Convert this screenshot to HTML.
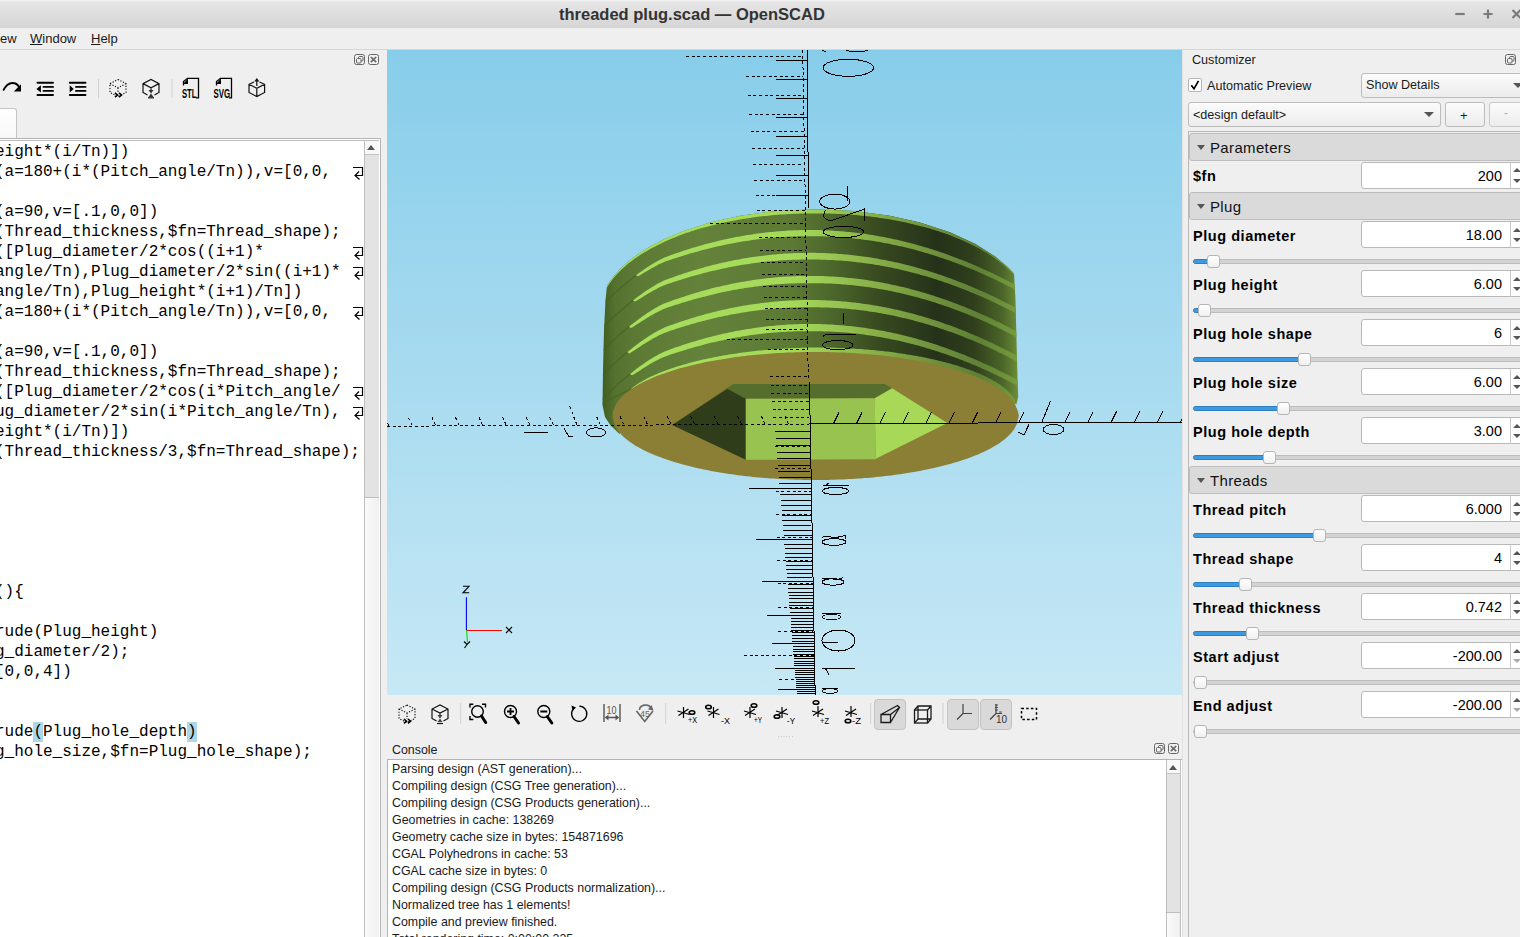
<!DOCTYPE html>
<html><head><meta charset="utf-8">
<style>
*{box-sizing:border-box}
html,body{margin:0;padding:0}
body{width:1520px;height:937px;overflow:hidden;position:relative;background:#efefef;font-family:"Liberation Sans",sans-serif;color:#000}
.a{position:absolute}
#title{left:0;top:0;width:1520px;height:28px;background:linear-gradient(#f4f4f4 0,#e6e6e6 2px,#d5d5d5 28px)}
#title .t{left:559px;top:5px;font-size:16.5px;font-weight:bold;color:#333;white-space:nowrap}
#menu{left:0;top:28px;width:1520px;height:22px;background:#efefef;border-bottom:1px solid #d6d6d6}
.mi{top:3px;font-size:13px;color:#1a1a1a;white-space:nowrap}
.code b{font-weight:normal;background:#acd7e6;display:inline-block;height:20px;vertical-align:top}
.code{font-family:"Liberation Mono",monospace;font-size:16px;white-space:pre;line-height:20px;height:20px;color:#000}
.cons{font-size:12.4px;white-space:pre;color:#1a1a1a;line-height:17px}
.lbl{font-size:14.5px;font-weight:bold;letter-spacing:0.55px;white-space:nowrap}
.spin{left:1361px;width:170px;height:27px;background:#fff;border:1px solid #b9b9b9;border-radius:3px}
.spin .v{right:28px;top:5px;font-size:14.5px;white-space:nowrap;text-align:right}
.spin .sep{left:147.5px;top:0;width:1px;height:26px;background:#c8c8c8}
.groove{left:1193px;width:330px;height:5px;background:#d3d3d3;border:1px solid #bdbdbd;border-radius:3px}
.fill{left:1193px;height:5px;background:#3d9ae0;border:1px solid #2f7fbf;border-radius:3px}
.handle{width:13px;height:13px;background:linear-gradient(#fff,#f0f0f0);border:1px solid #b5b5b5;border-radius:3px}
.hdr{left:1189px;width:340px;height:28px;background:#dadada;border:1px solid #bdbdbd;border-radius:3px}
.hdr .tx{left:20px;top:5px;font-size:15px;letter-spacing:0.35px;color:#111;white-space:nowrap}
.hdr .tri{left:7px;top:11px;width:0;height:0;border-left:4.5px solid transparent;border-right:4.5px solid transparent;border-top:5px solid #555}
</style></head>
<body>
<div id="title" class="a"><div class="a t">threaded plug.scad — OpenSCAD</div></div>
<svg class="a" style="left:1440px;top:0" width="80" height="28"><g stroke="#7a7a7a" stroke-width="2.2" fill="none"><path d="M1455.3 14H1464.7" transform="translate(-1440 0)"/><path d="M1483.5 14H1492.5M1488 9.5V18.5" transform="translate(-1440 0)"/><path d="M1512.5 10L1520.5 18M1520.5 10L1512.5 18" transform="translate(-1440 0)"/></g></svg>
<svg class="a" style="left:381px;top:505px" width="6" height="24"><path d="M3.5 6V20" stroke="#b0b0b0" stroke-width="1" stroke-dasharray="1 2"/></svg>
<div id="menu" class="a">
  <div class="a mi" style="left:0">ew</div>
  <div class="a mi" style="left:30px"><u>W</u>indow</div>
  <div class="a mi" style="left:91px"><u>H</u>elp</div>
</div>

<!-- LEFT EDITOR DOCK -->
<div class="a" id="editor" style="left:0;top:50px;width:387px;height:887px;background:#efefef">
</div>
<svg class="a" style="left:0;top:50px" width="387" height="88" viewBox="0 50 387 88">
<g fill="none" stroke="#666" stroke-width="1">
 <rect x="354.5" y="54.5" width="10" height="10" rx="2"/>
 <rect x="356.5" y="58.5" width="4.5" height="4.5" rx="1" stroke-width="1"/>
 <path d="M358.5 58V57.5Q358.5 56.5 359.5 56.5H362Q363 56.5 363 57.5V60Q363 61 362 61H361"/>
 <rect x="368.5" y="54.5" width="10" height="10" rx="2"/>
 <path d="M370.8 57L376.2 62.2M376.2 57L370.8 62.2" stroke-width="1.6"/>
</g>
<!-- redo -->
<path d="M3.2 90.5Q7 83 12.5 83Q17 83 19 87" fill="none" stroke="#000" stroke-width="1.8"/>
<path d="M21 84.3V91.6H13.8Z" fill="#000"/>
<!-- unindent -->
<g stroke="#000" stroke-width="1.9" stroke-linecap="round">
<path d="M37.5 82.8H53M43.5 86.9H53M43.5 90.9H53M37.5 95H53"/>
<path d="M69.8 82.8H85.5M76 86.9H85.5M76 90.9H85.5M69.8 95H85.5"/>
</g>
<path d="M36.4 88.9L40.9 85.3V92.4Z M69.7 85.3V92.4L73.7 88.9Z" fill="#000"/>
<path d="M98.5 79V98M172 79V98" stroke="#d2d2d2" stroke-width="1"/>
<!-- preview dotted cube -->
<g fill="none" stroke="#000" stroke-width="1.1" stroke-dasharray="1.2 1.6">
<path d="M118 79.5L126 83.6V92.5L118 96.5L110 92.5V83.6Z M110 83.6L118 87.8L126 83.6M118 87.8V93"/>
</g>
<path d="M115 92.8L117.5 95L115 97.2M119 92.8L121.5 95L119 97.2" fill="none" stroke="#000" stroke-width="1.6"/>
<!-- render cube -->
<g fill="none" stroke="#111" stroke-width="1.2">
<path d="M147.5 95L143 92.5V83.6L151 79.5L159 83.6V92.5L154.5 95M143 83.6L151 87.8L159 83.6M151 87.8V90"/>
</g>
<path d="M148.5 90H153.5L151 93.5Z M151 93.5L148.5 97H153.5Z" fill="#333"/>
<path d="M148 97.8H154" stroke="#111" stroke-width="1.2"/>
<!-- STL / SVG -->
<g fill="none" stroke="#000" stroke-width="1.3">
<path d="M183.5 85.5V81.5L187.5 78.3H198.5V97.8H196"/>
<path d="M216.5 85.5V81.5L220.5 78.3H231.5V97.8H229"/>
</g>
<path d="M183 84L188 78.5V84Z M216 84L221 78.5V84Z" fill="#000"/>
<text x="182" y="98" font-family="Liberation Sans" font-weight="bold" font-size="12" textLength="14.5" lengthAdjust="spacingAndGlyphs">STL</text>
<text x="213.5" y="98" font-family="Liberation Sans" font-weight="bold" font-size="12" textLength="16.5" lengthAdjust="spacingAndGlyphs">SVG</text>
<!-- export cube -->
<g fill="none" stroke="#111" stroke-width="1.2">
<path d="M254 82L249 84.3V92.5L256.8 96.5L264.6 92.5V84.3L259.5 82M249 84.3L256.8 88.3L264.6 84.3M256.8 88.3V96.5"/>
<path d="M256.8 86V79.5"/>
</g>
<path d="M254.3 81.5L256.8 78L259.3 81.5Z" fill="#111"/>
</svg>

<!-- tab -->
<div class="a" style="left:-4px;top:108px;width:21px;height:33px;background:linear-gradient(#fff,#f7f7f7);border:1px solid #c4c4c4;border-bottom:none;border-radius:3px 3px 0 0"></div>
<!-- editor frame -->
<div class="a" style="left:-2px;top:138px;width:383px;height:805px;border:1px solid #b3b3b3;background:#fff"></div>
<div class="a" style="left:-2px;top:140px;width:381px;height:800px;border:1px solid #bcbcbc;background:#fff"></div>
<!-- scrollbar -->
<div class="a" style="left:364px;top:141px;width:15px;height:796px;background:linear-gradient(90deg,#fafafa,#f0f0f0);border-left:1px solid #bfbfbf"></div>
<div class="a" style="left:364px;top:141px;width:15px;height:14px;background:#f8f8f8;border-left:1px solid #bfbfbf;border-bottom:1px solid #c4c4c4"></div>
<div class="a" style="left:367px;top:145px;width:0;height:0;border-left:4.5px solid transparent;border-right:4.5px solid transparent;border-bottom:5px solid #555"></div>
<div class="a" style="left:364px;top:155px;width:15px;height:343px;background:#e3e3e3;border-left:1px solid #bfbfbf;border-bottom:1px solid #bdbdbd"></div>

<div id="codebox" class="a" style="left:0;top:141px;width:364px;height:796px;overflow:hidden">
<div class="a code" style="left:-5px;top:1px">eight*(i/Tn)])</div>
<div class="a code" style="left:-5px;top:21px">(a=180+(i*(Pitch_angle/Tn)),v=[0,0,</div>
<div class="a code" style="left:-5px;top:61px">(a=90,v=[.1,0,0])</div>
<div class="a code" style="left:-5px;top:81px">(Thread_thickness,$fn=Thread_shape);</div>
<div class="a code" style="left:-5px;top:101px">([Plug_diameter/2*cos((i+1)*</div>
<div class="a code" style="left:-5px;top:121px">angle/Tn),Plug_diameter/2*sin((i+1)*</div>
<div class="a code" style="left:-5px;top:141px">angle/Tn),Plug_height*(i+1)/Tn])</div>
<div class="a code" style="left:-5px;top:161px">(a=180+(i*(Pitch_angle/Tn)),v=[0,0,</div>
<div class="a code" style="left:-5px;top:201px">(a=90,v=[.1,0,0])</div>
<div class="a code" style="left:-5px;top:221px">(Thread_thickness,$fn=Thread_shape);</div>
<div class="a code" style="left:-5px;top:241px">([Plug_diameter/2*cos(i*Pitch_angle/</div>
<div class="a code" style="left:-5px;top:261px">ug_diameter/2*sin(i*Pitch_angle/Tn),</div>
<div class="a code" style="left:-5px;top:281px">eight*(i/Tn)])</div>
<div class="a code" style="left:-5px;top:301px">(Thread_thickness/3,$fn=Thread_shape);</div>
<div class="a code" style="left:-5px;top:441px">(){</div>
<div class="a code" style="left:-5px;top:481px">rude(Plug_height)</div>
<div class="a code" style="left:-5px;top:501px">g_diameter/2);</div>
<div class="a code" style="left:-5px;top:521px">[0,0,4])</div>
<div class="a code" style="left:-5px;top:581px">rude<b>(</b>Plug_hole_depth<b>)</b></div>
<div class="a code" style="left:-5px;top:601px">g_hole_size,$fn=Plug_hole_shape);</div>
<svg class="a" style="left:0;top:0" width="364" height="796">
<path d="M353 26.5H362.5V34.5H355M359 30.5L355 34.5L359.5 38.5" fill="none" stroke="#000" stroke-width="1.2"/>
<path d="M353 106.5H362.5V114.5H355M359 110.5L355 114.5L359.5 118.5" fill="none" stroke="#000" stroke-width="1.2"/>
<path d="M353 126.5H362.5V134.5H355M359 130.5L355 134.5L359.5 138.5" fill="none" stroke="#000" stroke-width="1.2"/>
<path d="M353 166.5H362.5V174.5H355M359 170.5L355 174.5L359.5 178.5" fill="none" stroke="#000" stroke-width="1.2"/>
<path d="M353 246.5H362.5V254.5H355M359 250.5L355 254.5L359.5 258.5" fill="none" stroke="#000" stroke-width="1.2"/>
<path d="M353 266.5H362.5V274.5H355M359 270.5L355 274.5L359.5 278.5" fill="none" stroke="#000" stroke-width="1.2"/>
</svg>
</div>

<!-- VIEWPORT -->
<div class="a" id="vp" style="left:387px;top:50px;width:795px;height:645px;background:linear-gradient(#87cdea,#c7e8f5);overflow:hidden">
</div>
<!--VPSTART-->
<svg class="a" style="left:387px;top:50px" width="795" height="645" viewBox="387 50 795 645">
<defs>
<linearGradient id="gb" x1="600" x2="1022" y1="0" y2="0" gradientUnits="userSpaceOnUse">
<stop offset="0" stop-color="#3f5a1d"/><stop offset="0.035" stop-color="#557230"/><stop offset="0.1" stop-color="#5e7b36"/><stop offset="0.24" stop-color="#64823a"/>
<stop offset="0.45" stop-color="#5d7a35"/><stop offset="0.53" stop-color="#506b2d"/><stop offset="0.67" stop-color="#36481f"/>
<stop offset="0.8" stop-color="#25321a"/><stop offset="0.885" stop-color="#2f3e1c"/><stop offset="0.955" stop-color="#4c6629"/><stop offset="1" stop-color="#76993c"/>
</linearGradient>
<linearGradient id="gs" x1="600" x2="1022" y1="0" y2="0" gradientUnits="userSpaceOnUse">
<stop offset="0" stop-color="#a8e05c"/><stop offset="0.45" stop-color="#a5d95a"/><stop offset="0.55" stop-color="#98c753"/><stop offset="0.66" stop-color="#86ad47"/>
<stop offset="0.8" stop-color="#6d8f3b"/><stop offset="0.9" stop-color="#5f8035"/><stop offset="1" stop-color="#79a03e"/>
</linearGradient>
</defs>
<clipPath id="cb"><path d="M602.5 405.0L603.0 370.0L604.0 330.0L605.5 300.0L607.0 286.0L610.0 281.2L614.0 275.9L620.0 269.1L628.0 261.7L638.0 254.1L650.0 246.5L665.0 238.7L685.0 230.4L710.0 222.5L740.0 215.8L775.0 211.1L815.0 209.3L855.0 211.1L890.0 215.8L920.0 222.5L950.0 232.3L975.0 243.8L995.0 256.3L1008.0 267.2L1014.0 273.5L1015.5 300.0L1016.5 340.0L1017.6 380.7L1018.2 396.7L1016.5 404.0L1014.0 403.6L1011.0 399.8L1008.0 396.7L1005.0 394.1L1002.0 391.7L999.0 389.6L996.0 387.7L993.0 385.9L990.0 384.3L987.0 382.8L984.0 381.3L981.0 379.9L978.0 378.6L975.0 377.4L972.0 376.2L969.0 375.1L966.0 374.1L963.0 373.0L960.0 372.0L957.0 371.1L954.0 370.2L951.0 369.3L948.0 368.5L945.0 367.7L942.0 366.9L939.0 366.2L936.0 365.5L933.0 364.8L930.0 364.2L927.0 363.5L924.0 362.9L921.0 362.3L918.0 361.8L915.0 361.2L912.0 360.7L909.0 360.2L906.0 359.7L903.0 359.3L900.0 358.8L897.0 358.4L894.0 358.0L891.0 357.6L888.0 357.2L885.0 356.9L882.0 356.5L879.0 356.2L876.0 355.9L873.0 355.6L870.0 355.3L867.0 355.1L864.0 354.9L861.0 354.6L858.0 354.4L855.0 354.2L852.0 354.0L849.0 353.9L846.0 353.7L843.0 353.6L840.0 353.5L837.0 353.4L834.0 353.3L831.0 353.2L828.0 353.1L825.0 353.1L822.0 353.0L819.0 353.0L816.0 353.0L813.0 353.0L810.0 353.0L807.0 353.1L804.0 353.1L801.0 353.2L798.0 353.2L795.0 353.3L792.0 353.4L789.0 353.5L786.0 353.7L783.0 353.8L780.0 354.0L777.0 354.2L774.0 354.4L771.0 354.6L768.0 354.8L765.0 355.0L762.0 355.3L759.0 355.5L756.0 355.8L753.0 356.1L750.0 356.4L747.0 356.8L744.0 357.1L741.0 357.5L738.0 357.8L735.0 358.2L732.0 358.7L729.0 359.1L726.0 359.6L723.0 360.0L720.0 360.5L717.0 361.0L714.0 361.6L711.0 362.1L708.0 362.7L705.0 363.3L702.0 363.9L699.0 364.6L696.0 365.3L693.0 366.0L690.0 366.7L687.0 367.5L684.0 368.2L681.0 369.1L678.0 369.9L675.0 370.8L672.0 371.7L669.0 372.7L666.0 373.7L663.0 374.8L660.0 375.9L657.0 377.0L654.0 378.2L651.0 379.5L648.0 380.8L645.0 382.3L642.0 383.8L639.0 385.4L636.0 387.1L633.0 389.0L630.0 391.0L627.0 393.2L624.0 395.8L619.7 434.2L610.4 425.2L605.0 417.0Z"/></clipPath>
<path d="M602.5 405.0L603.0 370.0L604.0 330.0L605.5 300.0L607.0 286.0L610.0 281.2L614.0 275.9L620.0 269.1L628.0 261.7L638.0 254.1L650.0 246.5L665.0 238.7L685.0 230.4L710.0 222.5L740.0 215.8L775.0 211.1L815.0 209.3L855.0 211.1L890.0 215.8L920.0 222.5L950.0 232.3L975.0 243.8L995.0 256.3L1008.0 267.2L1014.0 273.5L1015.5 300.0L1016.5 340.0L1017.6 380.7L1018.2 396.7L1016.5 404.0L1014.0 403.6L1011.0 399.8L1008.0 396.7L1005.0 394.1L1002.0 391.7L999.0 389.6L996.0 387.7L993.0 385.9L990.0 384.3L987.0 382.8L984.0 381.3L981.0 379.9L978.0 378.6L975.0 377.4L972.0 376.2L969.0 375.1L966.0 374.1L963.0 373.0L960.0 372.0L957.0 371.1L954.0 370.2L951.0 369.3L948.0 368.5L945.0 367.7L942.0 366.9L939.0 366.2L936.0 365.5L933.0 364.8L930.0 364.2L927.0 363.5L924.0 362.9L921.0 362.3L918.0 361.8L915.0 361.2L912.0 360.7L909.0 360.2L906.0 359.7L903.0 359.3L900.0 358.8L897.0 358.4L894.0 358.0L891.0 357.6L888.0 357.2L885.0 356.9L882.0 356.5L879.0 356.2L876.0 355.9L873.0 355.6L870.0 355.3L867.0 355.1L864.0 354.9L861.0 354.6L858.0 354.4L855.0 354.2L852.0 354.0L849.0 353.9L846.0 353.7L843.0 353.6L840.0 353.5L837.0 353.4L834.0 353.3L831.0 353.2L828.0 353.1L825.0 353.1L822.0 353.0L819.0 353.0L816.0 353.0L813.0 353.0L810.0 353.0L807.0 353.1L804.0 353.1L801.0 353.2L798.0 353.2L795.0 353.3L792.0 353.4L789.0 353.5L786.0 353.7L783.0 353.8L780.0 354.0L777.0 354.2L774.0 354.4L771.0 354.6L768.0 354.8L765.0 355.0L762.0 355.3L759.0 355.5L756.0 355.8L753.0 356.1L750.0 356.4L747.0 356.8L744.0 357.1L741.0 357.5L738.0 357.8L735.0 358.2L732.0 358.7L729.0 359.1L726.0 359.6L723.0 360.0L720.0 360.5L717.0 361.0L714.0 361.6L711.0 362.1L708.0 362.7L705.0 363.3L702.0 363.9L699.0 364.6L696.0 365.3L693.0 366.0L690.0 366.7L687.0 367.5L684.0 368.2L681.0 369.1L678.0 369.9L675.0 370.8L672.0 371.7L669.0 372.7L666.0 373.7L663.0 374.8L660.0 375.9L657.0 377.0L654.0 378.2L651.0 379.5L648.0 380.8L645.0 382.3L642.0 383.8L639.0 385.4L636.0 387.1L633.0 389.0L630.0 391.0L627.0 393.2L624.0 395.8L619.7 434.2L610.4 425.2L605.0 417.0Z" fill="url(#gb)"/>
<g clip-path="url(#cb)">
<polygon points="606.0,287.8 608.0,284.3 610.0,281.2 612.0,278.4 614.0,275.9 616.0,273.5 618.0,271.2 620.0,269.1 622.0,267.2 624.0,265.3 626.0,263.5 628.0,261.7 630.0,260.1 632.0,258.5 634.0,257.0 636.0,255.5 638.0,254.1 640.0,252.8 642.0,251.4 644.0,250.1 646.0,248.9 648.0,247.7 650.0,246.5 652.0,245.4 654.0,244.3 656.0,243.2 658.0,242.2 660.0,241.2 662.0,240.2 664.0,239.2 666.0,238.3 668.0,237.4 670.0,236.5 672.0,235.6 674.0,234.8 676.0,233.9 678.0,233.1 680.0,232.3 682.0,231.6 684.0,230.8 686.0,230.1 688.0,229.4 690.0,228.7 692.0,228.0 694.0,227.3 696.0,226.7 698.0,226.0 700.0,225.4 702.0,224.8 704.0,224.2 706.0,223.6 708.0,223.1 710.0,222.5 712.0,222.0 714.0,221.5 716.0,221.0 718.0,220.5 720.0,220.0 722.0,219.5 724.0,219.1 726.0,218.6 728.0,218.2 730.0,217.8 732.0,217.4 734.0,217.0 736.0,216.6 738.0,216.2 740.0,215.8 742.0,215.5 744.0,215.1 746.0,214.8 748.0,214.5 750.0,214.2 752.0,213.9 754.0,213.6 756.0,213.3 758.0,213.0 760.0,212.8 762.0,212.5 764.0,212.3 766.0,212.0 768.0,211.8 770.0,211.6 772.0,211.4 774.0,211.2 776.0,211.0 778.0,210.9 780.0,210.7 782.0,210.5 784.0,210.4 786.0,210.3 788.0,210.1 790.0,210.0 792.0,209.9 794.0,209.8 796.0,209.7 798.0,209.6 800.0,209.6 802.0,209.5 804.0,209.4 806.0,209.4 808.0,209.4 810.0,209.3 812.0,209.3 814.0,209.3 816.0,209.3 818.0,209.3 820.0,209.3 822.0,209.4 824.0,209.4 826.0,209.4 828.0,209.5 830.0,209.6 832.0,209.6 834.0,209.7 836.0,209.8 838.0,209.9 840.0,210.0 842.0,210.1 844.0,210.3 846.0,210.4 848.0,210.5 850.0,210.7 852.0,210.9 854.0,211.0 856.0,211.2 858.0,211.4 860.0,211.6 862.0,211.8 864.0,212.0 866.0,212.3 868.0,212.5 870.0,212.8 872.0,213.0 874.0,213.3 876.0,213.6 878.0,213.9 880.0,214.2 882.0,214.5 884.0,214.8 886.0,215.1 888.0,215.5 890.0,215.8 892.0,216.2 894.0,216.6 896.0,217.0 898.0,217.4 900.0,217.8 902.0,218.2 904.0,218.6 906.0,219.1 908.0,219.5 910.0,220.0 912.0,220.5 914.0,221.0 916.0,221.5 918.0,222.0 920.0,222.5 922.0,223.1 924.0,223.6 926.0,224.2 928.0,224.8 930.0,225.4 932.0,226.0 934.0,226.7 936.0,227.3 938.0,228.0 940.0,228.7 942.0,229.4 944.0,230.1 946.0,230.8 948.0,231.6 950.0,232.3 952.0,233.1 954.0,233.9 956.0,234.8 958.0,235.6 960.0,236.5 962.0,237.4 964.0,238.3 966.0,239.2 968.0,240.2 970.0,241.2 972.0,242.2 974.0,243.2 976.0,244.3 978.0,245.4 980.0,246.5 982.0,247.7 984.0,248.9 986.0,250.1 988.0,251.4 990.0,252.8 992.0,254.1 994.0,255.5 996.0,257.0 998.0,258.5 1000.0,260.1 1002.0,261.7 1004.0,263.5 1006.0,265.3 1008.0,267.2 1010.0,269.1 1012.0,271.2 1014.0,273.5 1014.0,275.2 1012.0,273.0 1010.0,271.0 1008.0,269.1 1006.0,267.2 1004.0,265.5 1002.0,263.8 1000.0,262.2 998.0,260.7 996.0,259.2 994.0,257.8 992.0,256.4 990.0,255.1 988.0,253.8 986.0,252.6 984.0,251.4 982.0,250.2 980.0,249.1 978.0,248.0 976.0,246.9 974.0,245.9 972.0,244.9 970.0,243.9 968.0,242.9 966.0,242.0 964.0,241.1 962.0,240.2 960.0,239.3 958.0,238.5 956.0,237.7 954.0,236.9 952.0,236.1 950.0,235.3 948.0,234.6 946.0,233.8 944.0,233.1 942.0,232.4 940.0,231.8 938.0,231.1 936.0,230.5 934.0,229.8 932.0,229.2 930.0,228.6 928.0,228.1 926.0,227.5 924.0,226.9 922.0,226.4 920.0,225.9 918.0,225.4 916.0,224.9 914.0,224.4 912.0,223.9 910.0,223.4 908.0,223.0 906.0,222.5 904.0,222.1 902.0,221.7 900.0,221.3 898.0,220.9 896.0,220.5 894.0,220.2 892.0,219.8 890.0,219.5 888.0,219.1 886.0,218.8 884.0,218.5 882.0,218.2 880.0,217.9 878.0,217.6 876.0,217.3 874.0,217.0 872.0,216.8 870.0,216.6 868.0,216.3 866.0,216.1 864.0,215.9 862.0,215.7 860.0,215.5 858.0,215.3 856.0,215.1 854.0,214.9 852.0,214.8 850.0,214.6 848.0,214.5 846.0,214.4 844.0,214.2 842.0,214.1 840.0,214.0 838.0,213.9 836.0,213.8 834.0,213.8 832.0,213.7 830.0,213.6 828.0,213.6 826.0,213.6 824.0,213.5 822.0,213.5 820.0,213.5 818.0,213.5 816.0,213.5 814.0,213.5 812.0,213.5 810.0,213.5 808.0,213.5 806.0,213.5 804.0,213.6 802.0,213.6 800.0,213.6 798.0,213.7 796.0,213.8 794.0,213.8 792.0,213.9 790.0,214.0 788.0,214.1 786.0,214.2 784.0,214.4 782.0,214.5 780.0,214.6 778.0,214.8 776.0,214.9 774.0,215.1 772.0,215.3 770.0,215.5 768.0,215.7 766.0,215.9 764.0,216.1 762.0,216.3 760.0,216.6 758.0,216.8 756.0,217.0 754.0,217.3 752.0,217.6 750.0,217.9 748.0,218.2 746.0,218.5 744.0,218.8 742.0,219.1 740.0,219.5 738.0,219.8 736.0,220.2 734.0,220.5 732.0,220.9 730.0,221.3 728.0,221.7 726.0,222.1 724.0,222.5 722.0,223.0 720.0,223.4 718.0,223.9 716.0,224.4 714.0,224.9 712.0,225.4 710.0,225.9 708.0,226.4 706.0,226.9 704.0,227.5 702.0,228.1 700.0,228.6 698.0,229.2 696.0,229.8 694.0,230.5 692.0,231.1 690.0,231.8 688.0,232.4 686.0,233.1 684.0,233.8 682.0,234.6 680.0,235.3 678.0,236.1 676.0,236.9 674.0,237.7 672.0,238.5 670.0,239.3 668.0,240.2 666.0,241.1 664.0,242.0 662.0,242.9 660.0,243.9 658.0,244.9 656.0,245.9 654.0,246.9 652.0,248.0 650.0,249.1 648.0,250.2 646.0,251.4 644.0,252.6 642.0,253.8 640.0,255.1 638.0,256.4 636.0,257.8 634.0,259.2 632.0,260.7 630.0,262.2 628.0,263.8 626.0,265.5 624.0,267.2 622.0,269.1 620.0,271.0 618.0,273.0 616.0,275.2 614.0,277.5 612.0,280.0 610.0,282.7 608.0,285.7 606.0,289.1" fill="url(#gs)"/>
<polygon points="636.0,275.3 638.0,273.8 640.0,272.3 642.0,270.9 644.0,269.5 646.0,268.1 648.0,266.8 650.0,265.5 652.0,264.2 654.0,263.0 656.0,261.9 658.0,260.7 660.0,259.7 662.0,258.7 664.0,257.7 666.0,257.0 668.0,256.2 670.0,255.5 672.0,254.8 674.0,254.0 676.0,253.3 678.0,252.7 680.0,252.0 682.0,251.3 684.0,250.6 686.0,250.0 688.0,249.3 690.0,248.7 692.0,248.1 694.0,247.5 696.0,246.9 698.0,246.3 700.0,245.7 702.0,245.2 704.0,244.6 706.0,244.1 708.0,243.5 710.0,243.0 712.0,242.5 714.0,242.0 716.0,241.5 718.0,241.0 720.0,240.5 722.0,240.1 724.0,239.6 726.0,239.2 728.0,238.7 730.0,238.3 732.0,237.9 734.0,237.5 736.0,237.1 738.0,236.7 740.0,236.4 742.0,236.0 744.0,235.7 746.0,235.3 748.0,235.0 750.0,234.7 752.0,234.4 754.0,234.1 756.0,233.8 758.0,233.5 760.0,233.2 762.0,233.0 764.0,232.8 766.0,232.5 768.0,232.3 770.0,232.1 772.0,231.9 774.0,231.7 776.0,231.5 778.0,231.3 780.0,231.2 782.0,231.0 784.0,230.9 786.0,230.7 788.0,230.6 790.0,230.5 792.0,230.4 794.0,230.3 796.0,230.3 798.0,230.2 800.0,230.1 802.0,230.1 804.0,230.0 806.0,230.0 808.0,230.0 810.0,230.0 812.0,230.0 814.0,230.0 816.0,230.0 818.0,230.1 820.0,230.1 822.0,230.2 824.0,230.3 826.0,230.3 828.0,230.4 830.0,230.5 832.0,230.6 834.0,230.7 836.0,230.9 838.0,231.0 840.0,231.2 842.0,231.3 844.0,231.5 846.0,231.7 848.0,231.9 850.0,232.1 852.0,232.3 854.0,232.5 856.0,232.8 858.0,233.0 860.0,233.2 862.0,233.5 864.0,233.8 866.0,234.1 868.0,234.4 870.0,234.7 872.0,235.0 874.0,235.3 876.0,235.7 878.0,236.0 880.0,236.4 882.0,236.7 884.0,237.1 886.0,237.5 888.0,237.9 890.0,238.3 892.0,238.7 894.0,239.2 896.0,239.6 898.0,240.1 900.0,240.5 902.0,241.0 904.0,241.5 906.0,242.0 908.0,242.5 910.0,243.0 912.0,243.5 914.0,244.1 916.0,244.6 918.0,245.2 920.0,245.7 922.0,246.3 924.0,246.9 926.0,247.5 928.0,248.1 930.0,248.7 932.0,249.3 934.0,250.0 936.0,250.6 938.0,251.3 940.0,252.0 942.0,252.7 944.0,253.3 946.0,254.0 948.0,254.8 950.0,255.5 952.0,256.2 954.0,257.0 956.0,257.7 958.0,258.5 960.0,259.2 962.0,260.0 964.0,260.8 966.0,261.6 968.0,262.5 970.0,263.3 972.0,264.1 974.0,265.0 976.0,265.8 978.0,266.7 980.0,267.6 982.0,268.5 984.0,269.4 986.0,270.3 988.0,271.2 990.0,272.1 992.0,273.1 994.0,274.0 996.0,275.0 998.0,275.9 1000.0,276.9 1002.0,277.9 1004.0,278.9 1006.0,279.9 1008.0,281.0 1010.0,282.0 1012.0,283.0 1014.0,284.1 1016.0,285.2 1018.0,286.2 1018.0,291.2 1016.0,290.1 1014.0,289.1 1012.0,288.0 1010.0,287.0 1008.0,285.9 1006.0,284.9 1004.0,283.9 1002.0,282.9 1000.0,282.0 998.0,281.0 996.0,280.0 994.0,279.1 992.0,278.1 990.0,277.2 988.0,276.3 986.0,275.4 984.0,274.5 982.0,273.6 980.0,272.7 978.0,271.8 976.0,271.0 974.0,270.1 972.0,269.3 970.0,268.5 968.0,267.7 966.0,266.9 964.0,266.1 962.0,265.3 960.0,264.5 958.0,263.8 956.0,263.0 954.0,262.3 952.0,261.5 950.0,260.8 948.0,260.1 946.0,259.4 944.0,258.7 942.0,258.0 940.0,257.4 938.0,256.7 936.0,256.1 934.0,255.4 932.0,254.8 930.0,254.2 928.0,253.6 926.0,253.0 924.0,252.4 922.0,251.8 920.0,251.2 918.0,250.7 916.0,250.1 914.0,249.6 912.0,249.1 910.0,248.6 908.0,248.1 906.0,247.6 904.0,247.1 902.0,246.6 900.0,246.2 898.0,245.7 896.0,245.3 894.0,244.9 892.0,244.4 890.0,244.0 888.0,243.6 886.0,243.2 884.0,242.9 882.0,242.5 880.0,242.1 878.0,241.8 876.0,241.5 874.0,241.1 872.0,240.8 870.0,240.5 868.0,240.2 866.0,239.9 864.0,239.7 862.0,239.4 860.0,239.1 858.0,238.9 856.0,238.7 854.0,238.4 852.0,238.2 850.0,238.0 848.0,237.8 846.0,237.7 844.0,237.5 842.0,237.3 840.0,237.2 838.0,237.0 836.0,236.9 834.0,236.8 832.0,236.7 830.0,236.6 828.0,236.5 826.0,236.4 824.0,236.4 822.0,236.3 820.0,236.3 818.0,236.2 816.0,236.2 814.0,236.2 812.0,236.2 810.0,236.2 808.0,236.2 806.0,236.2 804.0,236.2 802.0,236.2 800.0,236.3 798.0,236.3 796.0,236.4 794.0,236.4 792.0,236.5 790.0,236.6 788.0,236.7 786.0,236.8 784.0,236.9 782.0,237.0 780.0,237.1 778.0,237.3 776.0,237.4 774.0,237.6 772.0,237.8 770.0,238.0 768.0,238.2 766.0,238.4 764.0,238.6 762.0,238.8 760.0,239.0 758.0,239.3 756.0,239.5 754.0,239.8 752.0,240.1 750.0,240.4 748.0,240.7 746.0,241.0 744.0,241.3 742.0,241.6 740.0,242.0 738.0,242.3 736.0,242.7 734.0,243.0 732.0,243.4 730.0,243.8 728.0,244.2 726.0,244.6 724.0,245.0 722.0,245.5 720.0,245.9 718.0,246.3 716.0,246.8 714.0,247.3 712.0,247.7 710.0,248.2 708.0,248.7 706.0,249.2 704.0,249.7 702.0,250.3 700.0,250.8 698.0,251.4 696.0,251.9 694.0,252.5 692.0,253.0 690.0,253.6 688.0,254.2 686.0,254.8 684.0,255.4 682.0,256.1 680.0,256.7 678.0,257.3 676.0,258.0 674.0,258.6 672.0,259.3 670.0,260.0 668.0,260.6 666.0,261.3 664.0,262.1 662.0,262.9 660.0,263.8 658.0,264.8 656.0,265.9 654.0,267.0 652.0,268.1 650.0,269.2 648.0,270.4 646.0,271.6 644.0,272.8 642.0,274.0 640.0,275.2 638.0,276.3 636.0,275.3" fill="url(#gs)"/>
<polygon points="633.0,300.4 635.0,298.9 637.0,297.3 639.0,295.9 641.0,294.4 643.0,293.0 645.0,291.6 647.0,290.2 649.0,288.9 651.0,287.7 653.0,286.4 655.0,285.2 657.0,284.1 659.0,283.0 661.0,282.0 663.0,281.0 665.0,280.1 667.0,279.4 669.0,278.6 671.0,277.9 673.0,277.2 675.0,276.5 677.0,275.8 679.0,275.1 681.0,274.4 683.0,273.8 685.0,273.1 687.0,272.5 689.0,271.8 691.0,271.2 693.0,270.6 695.0,270.0 697.0,269.4 699.0,268.8 701.0,268.2 703.0,267.7 705.0,267.1 707.0,266.6 709.0,266.1 711.0,265.5 713.0,265.0 715.0,264.5 717.0,264.0 719.0,263.6 721.0,263.1 723.0,262.6 725.0,262.2 727.0,261.8 729.0,261.3 731.0,260.9 733.0,260.5 735.0,260.1 737.0,259.7 739.0,259.4 741.0,259.0 743.0,258.6 745.0,258.3 747.0,258.0 749.0,257.6 751.0,257.3 753.0,257.0 755.0,256.7 757.0,256.5 759.0,256.2 761.0,255.9 763.0,255.7 765.0,255.4 767.0,255.2 769.0,255.0 771.0,254.8 773.0,254.6 775.0,254.4 777.0,254.2 779.0,254.0 781.0,253.9 783.0,253.7 785.0,253.6 787.0,253.5 789.0,253.4 791.0,253.3 793.0,253.2 795.0,253.1 797.0,253.0 799.0,253.0 801.0,252.9 803.0,252.9 805.0,252.8 807.0,252.8 809.0,252.8 811.0,252.8 813.0,252.8 815.0,252.8 817.0,252.9 819.0,252.9 821.0,253.0 823.0,253.0 825.0,253.1 827.0,253.2 829.0,253.3 831.0,253.4 833.0,253.5 835.0,253.6 837.0,253.7 839.0,253.9 841.0,254.0 843.0,254.2 845.0,254.4 847.0,254.6 849.0,254.8 851.0,255.0 853.0,255.2 855.0,255.4 857.0,255.7 859.0,255.9 861.0,256.2 863.0,256.5 865.0,256.7 867.0,257.0 869.0,257.3 871.0,257.6 873.0,258.0 875.0,258.3 877.0,258.6 879.0,259.0 881.0,259.4 883.0,259.7 885.0,260.1 887.0,260.5 889.0,260.9 891.0,261.3 893.0,261.8 895.0,262.2 897.0,262.6 899.0,263.1 901.0,263.6 903.0,264.0 905.0,264.5 907.0,265.0 909.0,265.5 911.0,266.1 913.0,266.6 915.0,267.1 917.0,267.7 919.0,268.2 921.0,268.8 923.0,269.4 925.0,270.0 927.0,270.6 929.0,271.2 931.0,271.8 933.0,272.5 935.0,273.1 937.0,273.8 939.0,274.4 941.0,275.1 943.0,275.8 945.0,276.5 947.0,277.2 949.0,277.9 951.0,278.6 953.0,279.4 955.0,280.1 957.0,280.9 959.0,281.7 961.0,282.4 963.0,283.2 965.0,284.0 967.0,284.8 969.0,285.7 971.0,286.5 973.0,287.3 975.0,288.2 977.0,289.1 979.0,289.9 981.0,290.8 983.0,291.7 985.0,292.6 987.0,293.5 989.0,294.5 991.0,295.4 993.0,296.3 995.0,297.3 997.0,298.3 999.0,299.2 1001.0,300.2 1003.0,301.2 1005.0,302.2 1007.0,303.3 1009.0,304.3 1011.0,305.3 1013.0,306.4 1015.0,307.4 1017.0,308.5 1019.0,309.6 1019.0,315.0 1017.0,313.9 1015.0,312.9 1013.0,311.8 1011.0,310.8 1009.0,309.7 1007.0,308.7 1005.0,307.7 1003.0,306.7 1001.0,305.7 999.0,304.8 997.0,303.8 995.0,302.8 993.0,301.9 991.0,301.0 989.0,300.0 987.0,299.1 985.0,298.2 983.0,297.3 981.0,296.5 979.0,295.6 977.0,294.7 975.0,293.9 973.0,293.0 971.0,292.2 969.0,291.4 967.0,290.6 965.0,289.8 963.0,289.0 961.0,288.2 959.0,287.4 957.0,286.7 955.0,285.9 953.0,285.2 951.0,284.5 949.0,283.8 947.0,283.1 945.0,282.4 943.0,281.7 941.0,281.0 939.0,280.4 937.0,279.7 935.0,279.1 933.0,278.4 931.0,277.8 929.0,277.2 927.0,276.6 925.0,276.0 923.0,275.4 921.0,274.9 919.0,274.3 917.0,273.8 915.0,273.2 913.0,272.7 911.0,272.2 909.0,271.7 907.0,271.2 905.0,270.7 903.0,270.2 901.0,269.7 899.0,269.3 897.0,268.8 895.0,268.4 893.0,268.0 891.0,267.6 889.0,267.2 887.0,266.8 885.0,266.4 883.0,266.0 881.0,265.7 879.0,265.3 877.0,265.0 875.0,264.7 873.0,264.3 871.0,264.0 869.0,263.7 867.0,263.4 865.0,263.2 863.0,262.9 861.0,262.6 859.0,262.4 857.0,262.2 855.0,261.9 853.0,261.7 851.0,261.5 849.0,261.3 847.0,261.1 845.0,261.0 843.0,260.8 841.0,260.6 839.0,260.5 837.0,260.4 835.0,260.2 833.0,260.1 831.0,260.0 829.0,259.9 827.0,259.9 825.0,259.8 823.0,259.7 821.0,259.7 819.0,259.6 817.0,259.6 815.0,259.6 813.0,259.6 811.0,259.6 809.0,259.6 807.0,259.6 805.0,259.6 803.0,259.6 801.0,259.6 799.0,259.7 797.0,259.7 795.0,259.8 793.0,259.8 791.0,259.9 789.0,260.0 787.0,260.1 785.0,260.2 783.0,260.3 781.0,260.5 779.0,260.6 777.0,260.7 775.0,260.9 773.0,261.1 771.0,261.2 769.0,261.4 767.0,261.6 765.0,261.8 763.0,262.1 761.0,262.3 759.0,262.5 757.0,262.8 755.0,263.0 753.0,263.3 751.0,263.6 749.0,263.9 747.0,264.2 745.0,264.5 743.0,264.8 741.0,265.1 739.0,265.5 737.0,265.8 735.0,266.2 733.0,266.6 731.0,267.0 729.0,267.3 727.0,267.7 725.0,268.2 723.0,268.6 721.0,269.0 719.0,269.5 717.0,269.9 715.0,270.4 713.0,270.8 711.0,271.3 709.0,271.8 707.0,272.3 705.0,272.8 703.0,273.3 701.0,273.9 699.0,274.4 697.0,274.9 695.0,275.5 693.0,276.1 691.0,276.6 689.0,277.2 687.0,277.8 685.0,278.4 683.0,279.0 681.0,279.7 679.0,280.3 677.0,280.9 675.0,281.6 673.0,282.3 671.0,282.9 669.0,283.6 667.0,284.3 665.0,285.0 663.0,285.8 661.0,286.7 659.0,287.6 657.0,288.7 655.0,289.7 653.0,290.8 651.0,292.0 649.0,293.1 647.0,294.3 645.0,295.6 643.0,296.8 641.0,298.1 639.0,299.3 637.0,300.5 635.0,301.6 633.0,300.4" fill="url(#gs)"/>
<polygon points="629.0,326.7 631.0,325.1 633.0,323.5 635.0,322.0 637.0,320.4 639.0,319.0 641.0,317.5 643.0,316.1 645.0,314.7 647.0,313.3 649.0,312.0 651.0,310.8 653.0,309.5 655.0,308.3 657.0,307.2 659.0,306.1 661.0,305.1 663.0,304.1 665.0,303.2 667.0,302.5 669.0,301.7 671.0,301.0 673.0,300.3 675.0,299.6 677.0,298.9 679.0,298.2 681.0,297.5 683.0,296.9 685.0,296.2 687.0,295.6 689.0,294.9 691.0,294.3 693.0,293.7 695.0,293.1 697.0,292.5 699.0,291.9 701.0,291.3 703.0,290.8 705.0,290.2 707.0,289.7 709.0,289.2 711.0,288.6 713.0,288.1 715.0,287.6 717.0,287.1 719.0,286.7 721.0,286.2 723.0,285.7 725.0,285.3 727.0,284.9 729.0,284.4 731.0,284.0 733.0,283.6 735.0,283.2 737.0,282.8 739.0,282.5 741.0,282.1 743.0,281.7 745.0,281.4 747.0,281.1 749.0,280.7 751.0,280.4 753.0,280.1 755.0,279.8 757.0,279.6 759.0,279.3 761.0,279.0 763.0,278.8 765.0,278.5 767.0,278.3 769.0,278.1 771.0,277.9 773.0,277.7 775.0,277.5 777.0,277.3 779.0,277.1 781.0,277.0 783.0,276.8 785.0,276.7 787.0,276.6 789.0,276.5 791.0,276.4 793.0,276.3 795.0,276.2 797.0,276.1 799.0,276.1 801.0,276.0 803.0,276.0 805.0,275.9 807.0,275.9 809.0,275.9 811.0,275.9 813.0,275.9 815.0,275.9 817.0,276.0 819.0,276.0 821.0,276.1 823.0,276.1 825.0,276.2 827.0,276.3 829.0,276.4 831.0,276.5 833.0,276.6 835.0,276.7 837.0,276.8 839.0,277.0 841.0,277.1 843.0,277.3 845.0,277.5 847.0,277.7 849.0,277.9 851.0,278.1 853.0,278.3 855.0,278.5 857.0,278.8 859.0,279.0 861.0,279.3 863.0,279.6 865.0,279.8 867.0,280.1 869.0,280.4 871.0,280.7 873.0,281.1 875.0,281.4 877.0,281.7 879.0,282.1 881.0,282.5 883.0,282.8 885.0,283.2 887.0,283.6 889.0,284.0 891.0,284.4 893.0,284.9 895.0,285.3 897.0,285.7 899.0,286.2 901.0,286.7 903.0,287.1 905.0,287.6 907.0,288.1 909.0,288.6 911.0,289.2 913.0,289.7 915.0,290.2 917.0,290.8 919.0,291.3 921.0,291.9 923.0,292.5 925.0,293.1 927.0,293.7 929.0,294.3 931.0,294.9 933.0,295.6 935.0,296.2 937.0,296.9 939.0,297.5 941.0,298.2 943.0,298.9 945.0,299.6 947.0,300.3 949.0,301.0 951.0,301.7 953.0,302.5 955.0,303.2 957.0,304.0 959.0,304.8 961.0,305.5 963.0,306.3 965.0,307.1 967.0,307.9 969.0,308.8 971.0,309.6 973.0,310.4 975.0,311.3 977.0,312.2 979.0,313.0 981.0,313.9 983.0,314.8 985.0,315.7 987.0,316.6 989.0,317.6 991.0,318.5 993.0,319.4 995.0,320.4 997.0,321.4 999.0,322.3 1001.0,323.3 1003.0,324.3 1005.0,325.3 1007.0,326.4 1009.0,327.4 1011.0,328.4 1013.0,329.5 1015.0,330.5 1017.0,331.6 1019.0,332.7 1019.0,338.5 1017.0,337.4 1015.0,336.4 1013.0,335.3 1011.0,334.3 1009.0,333.2 1007.0,332.2 1005.0,331.2 1003.0,330.2 1001.0,329.2 999.0,328.3 997.0,327.3 995.0,326.3 993.0,325.4 991.0,324.5 989.0,323.5 987.0,322.6 985.0,321.7 983.0,320.8 981.0,320.0 979.0,319.1 977.0,318.2 975.0,317.4 973.0,316.5 971.0,315.7 969.0,314.9 967.0,314.1 965.0,313.3 963.0,312.5 961.0,311.7 959.0,311.0 957.0,310.2 955.0,309.5 953.0,308.7 951.0,308.0 949.0,307.3 947.0,306.6 945.0,305.9 943.0,305.2 941.0,304.6 939.0,303.9 937.0,303.2 935.0,302.6 933.0,302.0 931.0,301.3 929.0,300.7 927.0,300.1 925.0,299.6 923.0,299.0 921.0,298.4 919.0,297.8 917.0,297.3 915.0,296.8 913.0,296.2 911.0,295.7 909.0,295.2 907.0,294.7 905.0,294.2 903.0,293.8 901.0,293.3 899.0,292.8 897.0,292.4 895.0,292.0 893.0,291.5 891.0,291.1 889.0,290.7 887.0,290.3 885.0,290.0 883.0,289.6 881.0,289.2 879.0,288.9 877.0,288.5 875.0,288.2 873.0,287.9 871.0,287.6 869.0,287.3 867.0,287.0 865.0,286.7 863.0,286.5 861.0,286.2 859.0,286.0 857.0,285.7 855.0,285.5 853.0,285.3 851.0,285.1 849.0,284.9 847.0,284.7 845.0,284.5 843.0,284.4 841.0,284.2 839.0,284.1 837.0,284.0 835.0,283.8 833.0,283.7 831.0,283.6 829.0,283.5 827.0,283.5 825.0,283.4 823.0,283.3 821.0,283.3 819.0,283.2 817.0,283.2 815.0,283.2 813.0,283.2 811.0,283.2 809.0,283.2 807.0,283.2 805.0,283.2 803.0,283.2 801.0,283.2 799.0,283.3 797.0,283.3 795.0,283.4 793.0,283.4 791.0,283.5 789.0,283.6 787.0,283.7 785.0,283.8 783.0,283.9 781.0,284.0 779.0,284.2 777.0,284.3 775.0,284.5 773.0,284.7 771.0,284.8 769.0,285.0 767.0,285.2 765.0,285.4 763.0,285.6 761.0,285.9 759.0,286.1 757.0,286.4 755.0,286.6 753.0,286.9 751.0,287.2 749.0,287.5 747.0,287.8 745.0,288.1 743.0,288.4 741.0,288.7 739.0,289.1 737.0,289.4 735.0,289.8 733.0,290.1 731.0,290.5 729.0,290.9 727.0,291.3 725.0,291.7 723.0,292.1 721.0,292.6 719.0,293.0 717.0,293.5 715.0,293.9 713.0,294.4 711.0,294.9 709.0,295.4 707.0,295.9 705.0,296.4 703.0,296.9 701.0,297.4 699.0,298.0 697.0,298.5 695.0,299.1 693.0,299.6 691.0,300.2 689.0,300.8 687.0,301.4 685.0,302.0 683.0,302.6 681.0,303.2 679.0,303.9 677.0,304.5 675.0,305.1 673.0,305.8 671.0,306.5 669.0,307.1 667.0,307.8 665.0,308.5 663.0,309.3 661.0,310.2 659.0,311.2 657.0,312.2 655.0,313.3 653.0,314.4 651.0,315.5 649.0,316.7 647.0,317.9 645.0,319.2 643.0,320.5 641.0,321.7 639.0,323.0 637.0,324.3 635.0,325.6 633.0,326.9 631.0,328.1 629.0,326.7" fill="url(#gs)"/>
<polygon points="627.5,352.0 629.0,350.8 631.0,349.2 633.0,347.6 635.0,346.1 637.0,344.5 639.0,343.1 641.0,341.6 643.0,340.2 645.0,338.8 647.0,337.4 649.0,336.1 651.0,334.9 653.0,333.6 655.0,332.4 657.0,331.3 659.0,330.2 661.0,329.2 663.0,328.2 665.0,327.3 667.0,326.6 669.0,325.8 671.0,325.1 673.0,324.4 675.0,323.7 677.0,323.0 679.0,322.3 681.0,321.6 683.0,321.0 685.0,320.3 687.0,319.7 689.0,319.0 691.0,318.4 693.0,317.8 695.0,317.2 697.0,316.6 699.0,316.0 701.0,315.4 703.0,314.9 705.0,314.3 707.0,313.8 709.0,313.3 711.0,312.7 713.0,312.2 715.0,311.7 717.0,311.2 719.0,310.8 721.0,310.3 723.0,309.8 725.0,309.4 727.0,309.0 729.0,308.5 731.0,308.1 733.0,307.7 735.0,307.3 737.0,306.9 739.0,306.6 741.0,306.2 743.0,305.8 745.0,305.5 747.0,305.2 749.0,304.8 751.0,304.5 753.0,304.2 755.0,303.9 757.0,303.7 759.0,303.4 761.0,303.1 763.0,302.9 765.0,302.6 767.0,302.4 769.0,302.2 771.0,302.0 773.0,301.8 775.0,301.6 777.0,301.4 779.0,301.2 781.0,301.1 783.0,300.9 785.0,300.8 787.0,300.7 789.0,300.6 791.0,300.5 793.0,300.4 795.0,300.3 797.0,300.2 799.0,300.2 801.0,300.1 803.0,300.1 805.0,300.0 807.0,300.0 809.0,300.0 811.0,300.0 813.0,300.0 815.0,300.0 817.0,300.1 819.0,300.1 821.0,300.2 823.0,300.2 825.0,300.3 827.0,300.4 829.0,300.5 831.0,300.6 833.0,300.7 835.0,300.8 837.0,300.9 839.0,301.1 841.0,301.2 843.0,301.4 845.0,301.6 847.0,301.8 849.0,302.0 851.0,302.2 853.0,302.4 855.0,302.6 857.0,302.9 859.0,303.1 861.0,303.4 863.0,303.7 865.0,303.9 867.0,304.2 869.0,304.5 871.0,304.8 873.0,305.2 875.0,305.5 877.0,305.8 879.0,306.2 881.0,306.6 883.0,306.9 885.0,307.3 887.0,307.7 889.0,308.1 891.0,308.5 893.0,309.0 895.0,309.4 897.0,309.8 899.0,310.3 901.0,310.8 903.0,311.2 905.0,311.7 907.0,312.2 909.0,312.7 911.0,313.3 913.0,313.8 915.0,314.3 917.0,314.9 919.0,315.4 921.0,316.0 923.0,316.6 925.0,317.2 927.0,317.8 929.0,318.4 931.0,319.0 933.0,319.7 935.0,320.3 937.0,321.0 939.0,321.6 941.0,322.3 943.0,323.0 945.0,323.7 947.0,324.4 949.0,325.1 951.0,325.8 953.0,326.6 955.0,327.3 957.0,328.1 959.0,328.9 961.0,329.6 963.0,330.4 965.0,331.2 967.0,332.0 969.0,332.9 971.0,333.7 973.0,334.5 975.0,335.4 977.0,336.3 979.0,337.1 981.0,338.0 983.0,338.9 985.0,339.8 987.0,340.7 989.0,341.7 991.0,342.6 993.0,343.5 995.0,344.5 997.0,345.5 999.0,346.4 1001.0,347.4 1003.0,348.4 1005.0,349.4 1007.0,350.5 1009.0,351.5 1011.0,352.5 1013.0,353.6 1015.0,354.6 1017.0,355.7 1019.0,356.8 1019.0,362.6 1017.0,361.5 1015.0,360.5 1013.0,359.4 1011.0,358.4 1009.0,357.3 1007.0,356.3 1005.0,355.3 1003.0,354.3 1001.0,353.3 999.0,352.4 997.0,351.4 995.0,350.4 993.0,349.5 991.0,348.6 989.0,347.6 987.0,346.7 985.0,345.8 983.0,344.9 981.0,344.1 979.0,343.2 977.0,342.3 975.0,341.5 973.0,340.6 971.0,339.8 969.0,339.0 967.0,338.2 965.0,337.4 963.0,336.6 961.0,335.8 959.0,335.1 957.0,334.3 955.0,333.6 953.0,332.8 951.0,332.1 949.0,331.4 947.0,330.7 945.0,330.0 943.0,329.3 941.0,328.7 939.0,328.0 937.0,327.3 935.0,326.7 933.0,326.1 931.0,325.4 929.0,324.8 927.0,324.2 925.0,323.7 923.0,323.1 921.0,322.5 919.0,321.9 917.0,321.4 915.0,320.9 913.0,320.3 911.0,319.8 909.0,319.3 907.0,318.8 905.0,318.3 903.0,317.9 901.0,317.4 899.0,316.9 897.0,316.5 895.0,316.1 893.0,315.6 891.0,315.2 889.0,314.8 887.0,314.4 885.0,314.1 883.0,313.7 881.0,313.3 879.0,313.0 877.0,312.6 875.0,312.3 873.0,312.0 871.0,311.7 869.0,311.4 867.0,311.1 865.0,310.8 863.0,310.6 861.0,310.3 859.0,310.1 857.0,309.8 855.0,309.6 853.0,309.4 851.0,309.2 849.0,309.0 847.0,308.8 845.0,308.6 843.0,308.5 841.0,308.3 839.0,308.2 837.0,308.1 835.0,307.9 833.0,307.8 831.0,307.7 829.0,307.6 827.0,307.6 825.0,307.5 823.0,307.4 821.0,307.4 819.0,307.3 817.0,307.3 815.0,307.3 813.0,307.3 811.0,307.3 809.0,307.3 807.0,307.3 805.0,307.3 803.0,307.3 801.0,307.3 799.0,307.4 797.0,307.4 795.0,307.5 793.0,307.5 791.0,307.6 789.0,307.7 787.0,307.8 785.0,307.9 783.0,308.0 781.0,308.1 779.0,308.3 777.0,308.4 775.0,308.6 773.0,308.8 771.0,308.9 769.0,309.1 767.0,309.3 765.0,309.5 763.0,309.7 761.0,310.0 759.0,310.2 757.0,310.5 755.0,310.7 753.0,311.0 751.0,311.3 749.0,311.6 747.0,311.9 745.0,312.2 743.0,312.5 741.0,312.8 739.0,313.2 737.0,313.5 735.0,313.9 733.0,314.2 731.0,314.6 729.0,315.0 727.0,315.4 725.0,315.8 723.0,316.3 721.0,316.7 719.0,317.1 717.0,317.6 715.0,318.0 713.0,318.5 711.0,319.0 709.0,319.5 707.0,320.0 705.0,320.5 703.0,321.0 701.0,321.5 699.0,322.1 697.0,322.6 695.0,323.2 693.0,323.7 691.0,324.3 689.0,324.9 687.0,325.5 685.0,326.1 683.0,326.7 681.0,327.3 679.0,328.0 677.0,328.6 675.0,329.3 673.0,329.9 671.0,330.6 669.0,331.3 667.0,332.0 665.0,332.7 663.0,333.5 661.0,334.4 659.0,335.3 657.0,336.4 655.0,337.4 653.0,338.5 651.0,339.7 649.0,340.9 647.0,342.1 645.0,343.4 643.0,344.6 641.0,345.9 639.0,347.3 637.0,348.6 635.0,349.9 633.0,351.2 631.0,352.5 629.0,353.6 627.5,352.0" fill="url(#gs)"/>
<polygon points="630.0,374.0 632.0,372.4 634.0,370.8 636.0,369.3 638.0,367.8 640.0,366.3 642.0,364.9 644.0,363.5 646.0,362.1 648.0,360.8 650.0,359.5 652.0,358.2 654.0,357.0 656.0,355.9 658.0,354.7 660.0,353.7 662.0,352.7 664.0,351.7 666.0,351.0 668.0,350.2 670.0,349.5 672.0,348.8 674.0,348.0 676.0,347.3 678.0,346.7 680.0,346.0 682.0,345.3 684.0,344.6 686.0,344.0 688.0,343.3 690.0,342.7 692.0,342.1 694.0,341.5 696.0,340.9 698.0,340.3 700.0,339.7 702.0,339.2 704.0,338.6 706.0,338.1 708.0,337.5 710.0,337.0 712.0,336.5 714.0,336.0 716.0,335.5 718.0,335.0 720.0,334.5 722.0,334.1 724.0,333.6 726.0,333.2 728.0,332.7 730.0,332.3 732.0,331.9 734.0,331.5 736.0,331.1 738.0,330.7 740.0,330.4 742.0,330.0 744.0,329.7 746.0,329.3 748.0,329.0 750.0,328.7 752.0,328.4 754.0,328.1 756.0,327.8 758.0,327.5 760.0,327.2 762.0,327.0 764.0,326.8 766.0,326.5 768.0,326.3 770.0,326.1 772.0,325.9 774.0,325.7 776.0,325.5 778.0,325.3 780.0,325.2 782.0,325.0 784.0,324.9 786.0,324.7 788.0,324.6 790.0,324.5 792.0,324.4 794.0,324.3 796.0,324.3 798.0,324.2 800.0,324.1 802.0,324.1 804.0,324.0 806.0,324.0 808.0,324.0 810.0,324.0 812.0,324.0 814.0,324.0 816.0,324.0 818.0,324.1 820.0,324.1 822.0,324.2 824.0,324.3 826.0,324.3 828.0,324.4 830.0,324.5 832.0,324.6 834.0,324.7 836.0,324.9 838.0,325.0 840.0,325.2 842.0,325.3 844.0,325.5 846.0,325.7 848.0,325.9 850.0,326.1 852.0,326.3 854.0,326.5 856.0,326.8 858.0,327.0 860.0,327.2 862.0,327.5 864.0,327.8 866.0,328.1 868.0,328.4 870.0,328.7 872.0,329.0 874.0,329.3 876.0,329.7 878.0,330.0 880.0,330.4 882.0,330.7 884.0,331.1 886.0,331.5 888.0,331.9 890.0,332.3 892.0,332.7 894.0,333.2 896.0,333.6 898.0,334.1 900.0,334.5 902.0,335.0 904.0,335.5 906.0,336.0 908.0,336.5 910.0,337.0 912.0,337.5 914.0,338.1 916.0,338.6 918.0,339.2 920.0,339.7 922.0,340.3 924.0,340.9 926.0,341.5 928.0,342.1 930.0,342.7 932.0,343.3 934.0,344.0 936.0,344.6 938.0,345.3 940.0,346.0 942.0,346.7 944.0,347.3 946.0,348.0 948.0,348.8 950.0,349.5 952.0,350.2 954.0,351.0 956.0,351.7 958.0,352.5 960.0,353.2 962.0,354.0 964.0,354.8 966.0,355.6 968.0,356.5 970.0,357.3 972.0,358.1 974.0,359.0 976.0,359.8 978.0,360.7 980.0,361.6 982.0,362.5 984.0,363.4 986.0,364.3 988.0,365.2 990.0,366.1 992.0,367.1 994.0,368.0 996.0,369.0 998.0,369.9 1000.0,370.9 1002.0,371.9 1004.0,372.9 1006.0,373.9 1008.0,375.0 1010.0,376.0 1012.0,377.0 1014.0,378.1 1016.0,379.2 1018.0,380.2 1018.0,386.0 1016.0,384.9 1014.0,383.9 1012.0,382.8 1010.0,381.8 1008.0,380.7 1006.0,379.7 1004.0,378.7 1002.0,377.7 1000.0,376.8 998.0,375.8 996.0,374.8 994.0,373.9 992.0,373.0 990.0,372.0 988.0,371.1 986.0,370.2 984.0,369.3 982.0,368.4 980.0,367.5 978.0,366.7 976.0,365.8 974.0,365.0 972.0,364.2 970.0,363.3 968.0,362.5 966.0,361.7 964.0,360.9 962.0,360.1 960.0,359.4 958.0,358.6 956.0,357.9 954.0,357.1 952.0,356.4 950.0,355.7 948.0,355.0 946.0,354.3 944.0,353.6 942.0,352.9 940.0,352.2 938.0,351.6 936.0,350.9 934.0,350.3 932.0,349.7 930.0,349.1 928.0,348.5 926.0,347.9 924.0,347.3 922.0,346.7 920.0,346.1 918.0,345.6 916.0,345.0 914.0,344.5 912.0,344.0 910.0,343.5 908.0,343.0 906.0,342.5 904.0,342.0 902.0,341.5 900.0,341.1 898.0,340.6 896.0,340.2 894.0,339.8 892.0,339.4 890.0,338.9 888.0,338.5 886.0,338.2 884.0,337.8 882.0,337.4 880.0,337.1 878.0,336.7 876.0,336.4 874.0,336.1 872.0,335.8 870.0,335.4 868.0,335.2 866.0,334.9 864.0,334.6 862.0,334.3 860.0,334.1 858.0,333.8 856.0,333.6 854.0,333.4 852.0,333.2 850.0,333.0 848.0,332.8 846.0,332.6 844.0,332.5 842.0,332.3 840.0,332.2 838.0,332.0 836.0,331.9 834.0,331.8 832.0,331.7 830.0,331.6 828.0,331.5 826.0,331.4 824.0,331.4 822.0,331.3 820.0,331.3 818.0,331.2 816.0,331.2 814.0,331.2 812.0,331.2 810.0,331.2 808.0,331.2 806.0,331.2 804.0,331.2 802.0,331.2 800.0,331.2 798.0,331.3 796.0,331.3 794.0,331.4 792.0,331.5 790.0,331.6 788.0,331.6 786.0,331.7 784.0,331.9 782.0,332.0 780.0,332.1 778.0,332.3 776.0,332.4 774.0,332.6 772.0,332.7 770.0,332.9 768.0,333.1 766.0,333.3 764.0,333.5 762.0,333.8 760.0,334.0 758.0,334.2 756.0,334.5 754.0,334.8 752.0,335.0 750.0,335.3 748.0,335.6 746.0,335.9 744.0,336.2 742.0,336.6 740.0,336.9 738.0,337.2 736.0,337.6 734.0,338.0 732.0,338.3 730.0,338.7 728.0,339.1 726.0,339.5 724.0,339.9 722.0,340.4 720.0,340.8 718.0,341.2 716.0,341.7 714.0,342.2 712.0,342.6 710.0,343.1 708.0,343.6 706.0,344.1 704.0,344.6 702.0,345.2 700.0,345.7 698.0,346.2 696.0,346.8 694.0,347.3 692.0,347.9 690.0,348.5 688.0,349.1 686.0,349.7 684.0,350.3 682.0,350.9 680.0,351.5 678.0,352.2 676.0,352.8 674.0,353.5 672.0,354.1 670.0,354.8 668.0,355.5 666.0,356.2 664.0,356.9 662.0,357.8 660.0,358.7 658.0,359.7 656.0,360.7 654.0,361.8 652.0,363.0 650.0,364.1 648.0,365.3 646.0,366.5 644.0,367.8 642.0,369.1 640.0,370.4 638.0,371.7 636.0,372.9 634.0,374.2 632.0,375.3 630.0,374.0" fill="url(#gs)"/>
<path d="M636.0 275.3 L634.0 276.8 L632.0 278.4 L630.0 280.0 L628.0 281.6 L626.0 283.3 L624.0 285.0 L622.0 286.7 L620.0 288.4 L618.0 290.2 L616.0 292.0 L614.0 293.8 L612.0 295.6 L610.0 297.5 L608.0 299.4 L606.0 301.3 L604.0 303.3 L602.0 305.2 M633.0 300.4 L631.0 302.0 L629.0 303.6 L627.0 305.2 L625.0 306.9 L623.0 308.6 L621.0 310.3 L619.0 312.1 L617.0 313.9 L615.0 315.7 L613.0 317.5 L611.0 319.4 L609.0 321.2 L607.0 323.2 L605.0 325.1 L603.0 327.1 L601.0 329.0 M629.0 326.7 L627.0 328.3 L625.0 330.0 L623.0 331.7 L621.0 333.4 L619.0 335.2 L617.0 337.0 L615.0 338.8 L613.0 340.6 L611.0 342.5 L609.0 344.3 L607.0 346.3 L605.0 348.2 L603.0 350.2 L601.0 352.1 M627.0 352.4 L625.0 354.1 L623.0 355.8 L621.0 357.5 L619.0 359.3 L617.0 361.1 L615.0 362.9 L613.0 364.7 L611.0 366.6 L609.0 368.4 L607.0 370.4 L605.0 372.3 L603.0 374.3 L601.0 376.2 M630.0 374.0 L628.0 375.6 L626.0 377.3 L624.0 379.0 L622.0 380.7 L620.0 382.4 L618.0 384.2 L616.0 386.0 L614.0 387.8 L612.0 389.6 L610.0 391.5 L608.0 393.4 L606.0 395.3 L604.0 397.3 L602.0 399.2 M631.0 389.3 L629.0 390.3 L627.0 391.2 L625.0 392.1 L623.0 393.0 L621.0 394.0 L619.0 395.0 L617.0 395.9 L615.0 396.9 L613.0 397.9 L611.0 398.9 L609.0 399.9 L607.0 400.9 L605.0 401.9 L603.0 403.0 L601.0 404.0" fill="none" stroke="#44601f" stroke-width="1.6" opacity="0.55"/>
<polygon points="631.0,389.3 633.0,387.2 635.0,385.7 637.0,384.4 639.0,383.1 641.0,381.9 643.0,380.8 645.0,379.7 647.0,378.6 649.0,377.6 651.0,376.6 653.0,375.7 655.0,374.8 657.0,374.0 659.0,373.1 661.0,372.3 663.0,371.5 665.0,370.8 667.0,370.0 669.0,369.3 671.0,368.6 673.0,367.9 675.0,367.3 677.0,366.6 679.0,366.0 681.0,365.4 683.0,364.8 685.0,364.2 687.0,363.7 689.0,363.1 691.0,362.6 693.0,362.1 695.0,361.5 697.0,361.0 699.0,360.6 701.0,360.1 703.0,359.6 705.0,359.2 707.0,358.7 709.0,358.3 711.0,357.9 713.0,357.5 715.0,357.1 717.0,356.7 719.0,356.3 721.0,356.0 723.0,355.6 725.0,355.3 727.0,354.9 729.0,354.6 731.0,354.3 733.0,354.0 735.0,353.7 737.0,353.4 739.0,353.1 741.0,352.8 743.0,352.5 745.0,352.3 747.0,352.0 749.0,351.8 751.0,351.5 753.0,351.3 755.0,351.1 757.0,350.8 759.0,350.6 761.0,350.4 763.0,350.2 765.0,350.0 767.0,349.9 769.0,349.7 771.0,349.5 773.0,349.4 775.0,349.2 777.0,349.1 779.0,348.9 781.0,348.8 783.0,348.7 785.0,348.5 787.0,348.4 789.0,348.3 791.0,348.2 793.0,348.1 795.0,348.0 797.0,347.9 799.0,347.9 801.0,347.8 803.0,347.7 805.0,347.7 807.0,347.6 809.0,347.6 811.0,347.6 813.0,347.5 815.0,347.5 817.0,347.5 819.0,347.5 821.0,347.5 823.0,347.5 825.0,347.6 827.0,347.6 829.0,347.6 831.0,347.7 833.0,347.7 835.0,347.8 837.0,347.9 839.0,347.9 841.0,348.0 843.0,348.1 845.0,348.2 847.0,348.3 849.0,348.4 851.0,348.5 853.0,348.6 855.0,348.7 857.0,348.9 859.0,349.0 861.0,349.1 863.0,349.3 865.0,349.4 867.0,349.6 869.0,349.8 871.0,349.9 873.0,350.1 875.0,350.3 877.0,350.5 879.0,350.7 881.0,350.9 883.0,351.1 885.0,351.4 887.0,351.6 889.0,351.8 891.0,352.1 893.0,352.3 895.0,352.6 897.0,352.9 899.0,353.2 901.0,353.5 903.0,353.8 905.0,354.1 907.0,354.4 909.0,354.7 911.0,355.0 913.0,355.4 915.0,355.7 917.0,356.1 919.0,356.4 921.0,356.8 923.0,357.2 925.0,357.6 927.0,358.0 929.0,358.4 931.0,358.9 933.0,359.3 935.0,359.8 937.0,360.2 939.0,360.7 941.0,361.2 943.0,361.7 945.0,362.2 947.0,362.7 949.0,363.3 951.0,363.8 953.0,364.4 955.0,365.0 957.0,365.6 959.0,366.2 961.0,366.9 963.0,367.5 965.0,368.2 967.0,368.9 969.0,369.6 971.0,370.4 973.0,371.1 975.0,371.9 977.0,372.7 979.0,373.6 981.0,374.4 983.0,375.3 985.0,376.3 987.0,377.3 989.0,378.3 991.0,379.3 993.0,380.4 995.0,381.6 997.0,382.8 999.0,384.1 1001.0,385.5 1003.0,387.0 1005.0,388.6 1007.0,390.3 1009.0,392.2 1011.0,394.3 1013.0,396.7 1015.0,399.7 1015.0,405.2 1013.0,402.2 1011.0,399.8 1009.0,397.7 1007.0,395.8 1005.0,394.1 1003.0,392.5 1001.0,391.0 999.0,389.6 997.0,388.3 995.0,387.1 993.0,385.9 991.0,384.8 989.0,383.8 987.0,382.8 985.0,381.8 983.0,380.8 981.0,379.9 979.0,379.1 977.0,378.2 975.0,377.4 973.0,376.6 971.0,375.9 969.0,375.1 967.0,374.4 965.0,373.7 963.0,373.0 961.0,372.4 959.0,371.7 957.0,371.1 955.0,370.5 953.0,369.9 951.0,369.3 949.0,368.8 947.0,368.2 945.0,367.7 943.0,367.2 941.0,366.7 939.0,366.2 937.0,365.7 935.0,365.3 933.0,364.8 931.0,364.4 929.0,363.9 927.0,363.5 925.0,363.1 923.0,362.7 921.0,362.3 919.0,361.9 917.0,361.6 915.0,361.2 913.0,360.9 911.0,360.5 909.0,360.2 907.0,359.9 905.0,359.6 903.0,359.3 901.0,359.0 899.0,358.7 897.0,358.4 895.0,358.1 893.0,357.8 891.0,357.6 889.0,357.3 887.0,357.1 885.0,356.9 883.0,356.6 881.0,356.4 879.0,356.2 877.0,356.0 875.0,355.8 873.0,355.6 871.0,355.4 869.0,355.3 867.0,355.1 865.0,354.9 863.0,354.8 861.0,354.6 859.0,354.5 857.0,354.4 855.0,354.2 853.0,354.1 851.0,354.0 849.0,353.9 847.0,353.8 845.0,353.7 843.0,353.6 841.0,353.5 839.0,353.4 837.0,353.4 835.0,353.3 833.0,353.2 831.0,353.2 829.0,353.1 827.0,353.1 825.0,353.1 823.0,353.0 821.0,353.0 819.0,353.0 817.0,353.0 815.0,353.0 813.0,353.0 811.0,353.0 809.0,353.0 807.0,353.1 805.0,353.1 803.0,353.1 801.0,353.2 799.0,353.2 797.0,353.3 795.0,353.3 793.0,353.4 791.0,353.5 789.0,353.5 787.0,353.6 785.0,353.7 783.0,353.8 781.0,353.9 779.0,354.0 777.0,354.2 775.0,354.3 773.0,354.4 771.0,354.6 769.0,354.7 767.0,354.9 765.0,355.0 763.0,355.2 761.0,355.3 759.0,355.5 757.0,355.7 755.0,355.9 753.0,356.1 751.0,356.3 749.0,356.5 747.0,356.8 745.0,357.0 743.0,357.2 741.0,357.5 739.0,357.7 737.0,358.0 735.0,358.2 733.0,358.5 731.0,358.8 729.0,359.1 727.0,359.4 725.0,359.7 723.0,360.0 721.0,360.4 719.0,360.7 717.0,361.0 715.0,361.4 713.0,361.8 711.0,362.1 709.0,362.5 707.0,362.9 705.0,363.3 703.0,363.7 701.0,364.2 699.0,364.6 697.0,365.0 695.0,365.5 693.0,366.0 691.0,366.4 689.0,366.9 687.0,367.5 685.0,368.0 683.0,368.5 681.0,369.1 679.0,369.6 677.0,370.2 675.0,370.8 673.0,371.4 671.0,372.0 669.0,372.7 667.0,373.4 665.0,374.1 663.0,374.8 661.0,375.5 659.0,376.2 657.0,377.0 655.0,377.8 653.0,378.6 651.0,379.5 649.0,380.4 647.0,381.3 645.0,382.3 643.0,383.3 641.0,384.3 639.0,385.4 637.0,386.5 635.0,387.7 633.0,389.0 631.0,390.3" fill="url(#gs)"/>
</g>
<polygon points="613.0,411.5 616.0,404.2 619.0,399.9 622.0,396.7 625.0,393.9 628.0,391.5 631.0,389.3 634.0,387.3 637.0,385.5 640.0,383.8 643.0,382.3 646.0,380.8 649.0,379.4 652.0,378.1 655.0,376.8 658.0,375.6 661.0,374.5 664.0,373.4 667.0,372.4 670.0,371.4 673.0,370.4 676.0,369.5 679.0,368.6 682.0,367.8 685.0,367.0 688.0,366.2 691.0,365.4 694.0,364.7 697.0,364.0 700.0,363.4 703.0,362.7 706.0,362.1 709.0,361.5 712.0,360.9 715.0,360.4 718.0,359.9 721.0,359.4 724.0,358.9 727.0,358.4 730.0,358.0 733.0,357.5 736.0,357.1 739.0,356.7 742.0,356.3 745.0,356.0 748.0,355.6 751.0,355.3 754.0,355.0 757.0,354.7 760.0,354.4 763.0,354.2 766.0,353.9 769.0,353.7 772.0,353.5 775.0,353.3 778.0,353.1 781.0,352.9 784.0,352.8 787.0,352.6 790.0,352.5 793.0,352.4 796.0,352.3 799.0,352.2 802.0,352.1 805.0,352.1 808.0,352.0 811.0,352.0 814.0,352.0 817.0,352.0 820.0,352.0 823.0,352.0 826.0,352.1 829.0,352.1 832.0,352.2 835.0,352.3 838.0,352.4 841.0,352.5 844.0,352.6 847.0,352.8 850.0,352.9 853.0,353.1 856.0,353.3 859.0,353.5 862.0,353.7 865.0,353.9 868.0,354.2 871.0,354.4 874.0,354.7 877.0,355.0 880.0,355.3 883.0,355.6 886.0,356.0 889.0,356.3 892.0,356.7 895.0,357.1 898.0,357.5 901.0,358.0 904.0,358.4 907.0,358.9 910.0,359.4 913.0,359.9 916.0,360.4 919.0,360.9 922.0,361.5 925.0,362.1 928.0,362.7 931.0,363.4 934.0,364.0 937.0,364.7 940.0,365.4 943.0,366.2 946.0,367.0 949.0,367.8 952.0,368.6 955.0,369.5 958.0,370.4 961.0,371.4 964.0,372.4 967.0,373.4 970.0,374.5 973.0,375.6 976.0,376.8 979.0,378.1 982.0,379.4 985.0,380.8 988.0,382.3 991.0,383.8 994.0,385.5 997.0,387.3 1000.0,389.3 1003.0,391.5 1006.0,393.9 1009.0,396.7 1012.0,399.9 1015.0,404.2 1018.0,411.5 1018.8,416.0 1017.0,423.8 1014.0,429.4 1011.0,433.2 1008.0,436.3 1005.0,438.9 1002.0,441.3 999.0,443.4 996.0,445.3 993.0,447.1 990.0,448.7 987.0,450.2 984.0,451.7 981.0,453.1 978.0,454.4 975.0,455.6 972.0,456.8 969.0,457.9 966.0,458.9 963.0,460.0 960.0,461.0 957.0,461.9 954.0,462.8 951.0,463.7 948.0,464.5 945.0,465.3 942.0,466.1 939.0,466.8 936.0,467.5 933.0,468.2 930.0,468.8 927.0,469.5 924.0,470.1 921.0,470.7 918.0,471.2 915.0,471.8 912.0,472.3 909.0,472.8 906.0,473.3 903.0,473.7 900.0,474.2 897.0,474.6 894.0,475.0 891.0,475.4 888.0,475.8 885.0,476.1 882.0,476.5 879.0,476.8 876.0,477.1 873.0,477.4 870.0,477.7 867.0,477.9 864.0,478.1 861.0,478.4 858.0,478.6 855.0,478.8 852.0,479.0 849.0,479.1 846.0,479.3 843.0,479.4 840.0,479.5 837.0,479.6 834.0,479.7 831.0,479.8 828.0,479.9 825.0,479.9 822.0,480.0 819.0,480.0 816.0,480.0 813.0,480.0 810.0,480.0 807.0,479.9 804.0,479.9 801.0,479.8 798.0,479.8 795.0,479.7 792.0,479.6 789.0,479.5 786.0,479.3 783.0,479.2 780.0,479.0 777.0,478.8 774.0,478.6 771.0,478.4 768.0,478.2 765.0,478.0 762.0,477.7 759.0,477.5 756.0,477.2 753.0,476.9 750.0,476.6 747.0,476.2 744.0,475.9 741.0,475.5 738.0,475.2 735.0,474.8 732.0,474.3 729.0,473.9 726.0,473.4 723.0,473.0 720.0,472.5 717.0,472.0 714.0,471.4 711.0,470.9 708.0,470.3 705.0,469.7 702.0,469.1 699.0,468.4 696.0,467.7 693.0,467.0 690.0,466.3 687.0,465.5 684.0,464.8 681.0,463.9 678.0,463.1 675.0,462.2 672.0,461.3 669.0,460.3 666.0,459.3 663.0,458.2 660.0,457.1 657.0,456.0 654.0,454.8 651.0,453.5 648.0,452.2 645.0,450.7 642.0,449.2 639.0,447.6 636.0,445.9 633.0,444.0 630.0,442.0 627.0,439.8 624.0,437.2 621.0,434.3 618.0,430.8 615.0,426.0 612.5,417.0" fill="#8b7f35"/>
<polygon points="672.1,425 733.2,383.9 884.7,383.9 892.1,388.2 874.7,398.2 745.8,398.7 727.4,388.7" fill="#556e2d"/>
<polygon points="672.1,425 727.4,388.7 745.8,398.7 745.8,459.7" fill="#2f3d1a"/>
<polygon points="745.8,398.7 874.7,398.2 875.8,459.2 745.8,459.7" fill="#98c350"/>
<polygon points="874.7,398.2 892.1,388.2 947.4,422.9 875.8,458.7" fill="#a8d858"/>
<!--AXES-->
<path d="M807.3 50.0L808.4 208.5M809.4 382.0L815.2 695.0M775.0 431.6L809.6 431.6M775.6 438.6L809.8 438.6M776.1 445.5L809.9 445.5M776.7 452.2L810.0 452.2M777.2 458.7L810.2 458.7M777.8 465.0L810.3 465.0M778.3 471.2L810.4 471.2M778.8 477.3L810.5 477.3M779.3 483.2L810.6 483.2M748.7 488.9L810.7 488.9M780.2 494.5L810.8 494.5M780.7 500.0L810.9 500.0M781.1 505.4L811.0 505.4M781.5 510.7L811.1 510.7M782.0 515.8L811.2 515.8M782.4 520.8L811.3 520.8M782.8 525.7L811.4 525.7M783.2 530.5L811.5 530.5M783.6 535.2L811.6 535.2M756.2 539.8L811.7 539.8M784.3 544.4L811.8 544.4M784.7 548.8L811.9 548.8M785.1 553.1L812.0 553.1M785.4 557.3L812.0 557.3M785.8 561.5L812.1 561.5M786.1 565.6L812.2 565.6M786.4 569.6L812.3 569.6M786.8 573.5L812.3 573.5M787.1 577.3L812.4 577.3M762.3 581.1L812.5 581.1M787.7 584.8L812.6 584.8M788.0 588.4L812.6 588.4M788.3 592.0L812.7 592.0M788.6 595.5L812.8 595.5M788.9 598.9L812.8 598.9M789.1 602.3L812.9 602.3M789.4 605.6L813.0 605.6M789.7 608.8L813.0 608.8M790.0 612.0L813.1 612.0M767.3 615.2L813.1 615.2M790.5 618.3L813.2 618.3M790.7 621.3L813.2 621.3M791.0 624.3L813.3 624.3M791.2 627.2L813.4 627.2M791.4 630.1L813.4 630.1M791.7 632.9L813.5 632.9M791.9 635.7L813.5 635.7M792.1 638.4L813.6 638.4M792.4 641.1L813.6 641.1M771.5 643.8L813.7 643.8M792.8 646.4L813.7 646.4M793.0 649.0L813.8 649.0M793.2 651.5L813.8 651.5M793.4 654.0L813.9 654.0M793.6 656.5L813.9 656.5M793.8 658.9L814.0 658.9M794.0 661.3L814.0 661.3M794.2 663.6L814.1 663.6M794.4 665.9L814.1 665.9M775.1 668.2L814.1 668.2M794.8 670.4L814.2 670.4M795.0 672.6L814.2 672.6M795.2 674.8L814.3 674.8M795.3 677.0L814.3 677.0M795.5 679.1L814.3 679.1M795.7 681.2L814.4 681.2M795.9 683.2L814.4 683.2M796.0 685.3L814.5 685.3M796.2 687.3L814.5 687.3M778.2 689.2L814.5 689.2M796.5 691.2L814.6 691.2M796.7 693.1L814.6 693.1M796.8 695.0L814.6 695.0M775.5 195.3L807.8 195.3M775.5 175.5L807.8 175.5M775.5 155.9L807.8 155.9M775.5 136.5L807.8 136.5M775.5 117.3L807.8 117.3M775.5 98.3L807.8 98.3M775.5 79.5L807.8 79.5M775.5 60.9L807.8 60.9M809.5 423.6L1182.0 422.3M833.5 423.5L839.0 412.5M856.6 423.4L862.1 412.4M879.8 423.4L885.3 412.4M902.9 423.3L908.4 412.3M926.0 423.2L931.5 412.2M949.1 423.1L954.6 412.1M972.2 423.0L977.7 412.0M995.4 422.9L1000.9 411.9M1018.5 422.9L1024.0 411.9M1041.6 422.8L1050.6 400.8M1064.7 422.7L1070.2 411.7M1087.8 422.6L1093.3 411.6M1111.0 422.5L1116.5 411.5M1134.1 422.5L1139.6 411.5M1157.2 422.4L1162.7 411.4M1180.3 422.3L1185.8 411.3" fill="none" stroke="#000" stroke-width="1" shape-rendering="crispEdges"/>
<path d="M802.7 50.0L808.3 378.0M773.3 417.0L808.8 417.0M772.7 409.4L808.7 409.4M772.1 401.5L808.5 401.5M771.4 393.4L808.4 393.4M770.8 385.1L808.3 385.1M770.1 376.5L808.1 376.5M767.9 349.3L807.7 349.3M726.7 339.6L807.5 339.6M766.3 329.7L807.3 329.7M765.5 319.4L807.2 319.4M764.7 308.8L807.0 308.8M763.8 297.9L806.8 297.9M762.9 286.6L806.6 286.6M762.0 274.9L806.4 274.9M761.0 262.8L806.2 262.8M760.0 250.3L806.0 250.3M759.0 237.3L805.8 237.3M710.2 223.9L805.6 223.9M756.8 210.0L805.4 210.0M755.6 195.5L805.1 195.5M754.4 180.5L804.9 180.5M753.2 164.9L804.6 164.9M751.9 148.7L804.4 148.7M750.5 131.8L804.1 131.8M749.1 114.2L803.8 114.2M747.7 95.9L803.5 95.9M746.1 76.8L803.2 76.8M686.2 56.8L802.8 56.8M774.9 446.2L809.9 446.2M775.3 468.6L810.3 468.6M775.8 491.2L810.8 491.2M776.2 514.0L811.2 514.0M776.6 537.0L811.6 537.0M777.1 560.2L812.1 560.2M777.5 583.6L812.5 583.6M778.0 607.2L813.0 607.2M778.4 631.0L813.4 631.0M743.9 655.0L813.9 655.0M779.3 679.2L814.3 679.2M387.0 426.2L809.5 424.3M784.8 415.9L788.8 424.4M761.3 416.0L765.3 424.5M737.7 416.1L741.7 424.6M714.2 416.2L718.2 424.7M690.7 416.3L694.7 424.8M667.2 416.4L671.2 424.9M643.7 416.5L647.7 425.0M620.1 416.6L624.1 425.1M596.6 416.7L600.6 425.2M569.6 406.3L577.1 425.3M549.6 417.0L553.6 425.5M526.1 417.1L530.1 425.6M502.5 417.2L506.5 425.7M479.0 417.3L483.0 425.8M455.5 417.4L459.5 425.9M432.0 417.5L436.0 426.0M408.5 417.6L412.5 426.1M384.9 417.7L388.9 426.2" fill="none" stroke="#000" stroke-width="1" stroke-dasharray="3 2.6" shape-rendering="crispEdges"/>
<g fill="none" stroke="#000" stroke-width="1" shape-rendering="crispEdges"><ellipse cx="848.3" cy="67.8" rx="25.3" ry="8.5"/><path d="M846 50.5Q857 53 868 50.5M822 50L826 52"/><ellipse cx="834.8" cy="201.6" rx="15" ry="7.5"/><path d="M847.5 186V201M825.5 210Q820 220 832 220.5L864.5 209V220.7"/><ellipse cx="843.4" cy="231.9" rx="20.2" ry="5.6"/><path d="M843.5 313V324M823 336.5L826 334.2H856"/><ellipse cx="837.8" cy="345.1" rx="15.3" ry="4.6"/><ellipse cx="1053.5" cy="429.5" rx="10.3" ry="5"/><path d="M1018 432.3L1024 434.8L1029 424.5"/><ellipse cx="596" cy="432.4" rx="9.7" ry="4.6"/><path d="M523.5 432.5H547.5M564 428.5L569 437L572.5 436"/><path d="M823 485.5H849M825 485.5L829 483"/><ellipse cx="835.5" cy="491" rx="13.3" ry="3.6"/><path d="M822 537.5Q826 535 834 538L845.5 535.5V538.5"/><ellipse cx="834" cy="542" rx="12" ry="3.3"/><path d="M822 579Q830 577 836 580L843.5 577.5"/><ellipse cx="833" cy="582" rx="11" ry="3.2"/><path d="M822 613H841"/><ellipse cx="831.5" cy="617" rx="9.5" ry="2.4"/><ellipse cx="838.5" cy="640.5" rx="16.5" ry="10.5"/><path d="M822 642H838"/><path d="M822 668H855M825 668L829 674.5"/><path d="M822 688.5H837.5"/><ellipse cx="830" cy="691" rx="7.5" ry="2.2"/></g>
<path d="M466.4 597.2V630.5" stroke="#0000ff" stroke-width="1.1"/>
<path d="M466.4 630.5H501.9" stroke="#ff0000" stroke-width="1.1"/>
<path d="M466.6 630.5L467.5 642.5" stroke="#00e000" stroke-width="1.1"/>
<path d="M463 586.3H469L463 592.8H469.2M506 627L512 633M512 627L506 633M464 641.5L467 644.5L470 641.5M467 644.5L464.5 648" fill="none" stroke="#000" stroke-width="1.1"/>
</svg>
<!--VPEND-->

<div class="a" style="left:874px;top:699px;width:32px;height:31px;background:#d9d9d9;border:1px solid #c3c3c3;border-radius:4px"></div>
<div class="a" style="left:947px;top:699px;width:32px;height:31px;background:#d9d9d9;border:1px solid #c3c3c3;border-radius:4px"></div>
<div class="a" style="left:980px;top:699px;width:32px;height:31px;background:#d9d9d9;border:1px solid #c3c3c3;border-radius:4px"></div>
<svg class="a" style="left:387px;top:695px" width="800" height="45" viewBox="387 695 800 45">
<path d="M460.7 703V724M665.7 703V724M870.7 703V724M943 703V724" stroke="#d2d2d2"/>
<!-- preview cube -->
<g fill="none" stroke="#000" stroke-width="1.1" stroke-dasharray="1.2 1.6">
<path d="M407 705L415 709V718.5L407 722.5L399 718.5V709Z M399 709L407 713L415 709M407 713V719"/>
</g>
<path d="M404 719L406.5 721.2L404 723.4M408 719L410.5 721.2L408 723.4" fill="none" stroke="#000" stroke-width="1.6"/>
<!-- render cube -->
<g fill="none" stroke="#111" stroke-width="1.2">
<path d="M436.5 721L432 718.5V709L440 705L448 709V718.5L443.5 721M432 709L440 713L448 709M440 713V715"/>
</g>
<path d="M437.5 715H442.5L440 718.5Z M440 718.5L437.5 722H442.5Z" fill="#444"/>
<path d="M437 723.5H443" stroke="#111" stroke-width="1.2"/>
<!-- view all -->
<g fill="none" stroke="#000" stroke-width="1.4">
<circle cx="477.5" cy="711.5" r="5.8"/>
<path d="M470 707.5V704.3H473.3M482 704.3H485.5V707.5M470 716V719.5H473.3"/>
</g>
<path d="M481.5 716L485.7 722.5" stroke="#000" stroke-width="3" stroke-linecap="round"/>
<!-- zoom in/out -->
<g fill="none" stroke="#000" stroke-width="1.4">
<circle cx="510.5" cy="711.5" r="6"/><circle cx="543.8" cy="711.5" r="6"/>
<path d="M507 711.5H514M510.5 708V715M540.3 711.5H547.3" stroke-width="1.8"/>
<path d="M514 716.5L518.5 723M547.3 716.5L551.8 723" stroke-width="3" stroke-linecap="round"/>
</g>
<!-- reset view -->
<path d="M573.5 708.8A7.6 7.6 0 1 0 579.3 706.2" fill="none" stroke="#000" stroke-width="1.3"/>
<path d="M571.5 705.5L576 707.5L572.5 711Z" fill="#000"/>
<!-- scale 10 -->
<g fill="none" stroke="#555" stroke-width="1.4">
<path d="M604 704V722M620 704V722M605.5 717.5H618.5"/>
</g>
<path d="M605 717.5L608.5 714.5V720.5Z M619 717.5L615.5 714.5V720.5Z" fill="#555"/>
<text x="606.5" y="713.5" font-family="Liberation Sans" font-size="10" fill="#555" textLength="10" lengthAdjust="spacingAndGlyphs">10</text>
<!-- 45 -->
<path d="M636.5 711L644.7 721.5L653 711" fill="none" stroke="#666" stroke-width="1.6"/>
<path d="M639.5 710A6 5 0 0 1 651 708" fill="none" stroke="#666" stroke-width="1.6"/>
<path d="M651.5 705L653.5 710.5L648 709.5Z" fill="#666"/>
<text x="640" y="717" font-family="Liberation Sans" font-size="9" fill="#666">45</text>
<!-- views +X -X +Y -Y +Z -Z -->
<g fill="none" stroke="#000" stroke-width="1.2">
 <path d="M683.5 707V718M677.5 711L689.5 714.5M678.5 715.5L688.5 709"/>
 <path d="M713.5 707V718M707.5 711L719.5 714.5M708.5 715.5L718.5 709"/>
 <path d="M750 707V718M744 711L756 714.5M745 715.5L755 709"/>
 <path d="M782 707V718M776 711L788 714.5M777 715.5L787 709"/>
 <path d="M818 706V717M812 711L824 714.5M813 715.5L823 709"/>
 <path d="M851 706V717M845 711L857 714.5M846 715.5L856 709"/>
</g>
<g fill="none" stroke="#000" stroke-width="1.6">
 <ellipse cx="692" cy="712.5" rx="2.8" ry="1.8"/>
 <ellipse cx="708.5" cy="707" rx="2.8" ry="1.8"/>
 <ellipse cx="754" cy="705.5" rx="2.8" ry="1.8"/>
 <ellipse cx="777" cy="716.5" rx="2.8" ry="1.8"/>
 <ellipse cx="816" cy="702.5" rx="2.8" ry="1.8"/>
 <ellipse cx="848" cy="721" rx="2.8" ry="1.8"/>
</g>
<g font-family="Liberation Sans" font-size="9.5" fill="#000">
 <text x="688" y="722.5" textLength="9" lengthAdjust="spacingAndGlyphs">+X</text>
 <text x="721" y="724" textLength="9" lengthAdjust="spacingAndGlyphs">-X</text>
 <text x="754" y="722.5" textLength="8" lengthAdjust="spacingAndGlyphs">+Y</text>
 <text x="787" y="724" textLength="8" lengthAdjust="spacingAndGlyphs">-Y</text>
 <text x="820" y="724" textLength="9" lengthAdjust="spacingAndGlyphs">+Z</text>
 <text x="852" y="724" textLength="9" lengthAdjust="spacingAndGlyphs">-Z</text>
</g>
<!-- perspective -->
<g fill="none" stroke="#1a1a1a" stroke-width="1.3">
<path d="M881 714.5H890.5V722.5H881Z M881 714.5L897.5 705.5L899.5 707.5L890.5 714.5M890.5 722.5L899.5 707.5"/>
</g>
<!-- ortho -->
<g fill="none" stroke="#1a1a1a" stroke-width="1.3">
<rect x="914.5" y="710" width="13" height="13"/><path d="M914.5 710L918 706H931V719L927.5 723M927.5 710L931 706M918 706V719H931M914.5 723L918 719"/>
</g>
<!-- axes -->
<path d="M963 704V713.5H972M963 713.5L957 719.5" fill="none" stroke="#444" stroke-width="1.2"/>
<path d="M996 704V713.5H1002M996 713.5L990 719.5" fill="none" stroke="#444" stroke-width="1.2"/>
<path d="M995 705H998M995 707.5H998M995 710H998M999 712H1002" stroke="#444" stroke-width="0.9"/>
<text x="996" y="723" font-family="Liberation Sans" font-size="10" fill="#333">10</text>
<!-- edges -->
<rect x="1021.5" y="708.5" width="15" height="11" fill="none" stroke="#000" stroke-width="1.5" stroke-dasharray="2.5 2.2"/>
<!-- splitter dots -->
<path d="M778 736.5H793" stroke="#b5b5b5" stroke-width="0.8" stroke-dasharray="0.8 2"/>
</svg>

<!-- CONSOLE -->
<div class="a" style="left:392px;top:743px;font-size:12.4px;color:#1a1a1a">Console</div>
<div class="a" style="left:387px;top:759px;width:796px;height:190px;background:#fff;border:1px solid #b3b3b3"></div>
<svg class="a" style="left:1150px;top:740px" width="36" height="18"><g fill="none" stroke="#666" stroke-width="1">
 <rect x="4.5" y="3.5" width="10" height="10" rx="2"/><rect x="6.5" y="7.5" width="4.5" height="4.5" rx="1"/><path d="M8.5 7V6.5Q8.5 5.5 9.5 5.5H12Q13 5.5 13 6.5V9Q13 10 12 10H11"/>
 <rect x="18.5" y="3.5" width="10" height="10" rx="2"/><path d="M20.8 6L26.2 11.2M26.2 6L20.8 11.2" stroke-width="1.6"/></g></svg>
<div class="a" style="left:388px;top:760px;width:778px;height:177px;overflow:hidden">
<div class="a cons" style="left:4px;top:1px">Parsing design (AST generation)...
Compiling design (CSG Tree generation)...
Compiling design (CSG Products generation)...
Geometries in cache: 138269
Geometry cache size in bytes: 154871696
CGAL Polyhedrons in cache: 53
CGAL cache size in bytes: 0
Compiling design (CSG Products normalization)...
Normalized tree has 1 elements!
Compile and preview finished.
Total rendering time: 0:00:00.325</div>
</div>
<div class="a" style="left:1166px;top:760px;width:15px;height:177px;background:linear-gradient(90deg,#fafafa,#f0f0f0);border-left:1px solid #bfbfbf;border-right:1px solid #bfbfbf"></div>
<div class="a" style="left:1166px;top:760px;width:15px;height:14px;background:#f8f8f8;border-left:1px solid #bfbfbf;border-bottom:1px solid #c4c4c4;border-right:1px solid #bfbfbf"></div>
<div class="a" style="left:1169px;top:765px;width:0;height:0;border-left:4.5px solid transparent;border-right:4.5px solid transparent;border-bottom:5px solid #555"></div>
<div class="a" style="left:1166px;top:774px;width:15px;height:139px;background:#e3e3e3;border-left:1px solid #bfbfbf;border-bottom:1px solid #bdbdbd;border-right:1px solid #bfbfbf"></div>


<!-- CUSTOMIZER -->
<div class="a" style="left:1192px;top:52.5px;font-size:12.6px;color:#1a1a1a">Customizer</div>
<div class="a" style="left:1182px;top:50px;width:1px;height:887px;background:#e2e2e2"></div>
<svg class="a" style="left:1500px;top:50px" width="20" height="20"><g fill="none" stroke="#666" stroke-width="1"><rect x="5.5" y="4.5" width="10" height="10" rx="2"/><rect x="7.5" y="8.5" width="4.5" height="4.5" rx="1"/><path d="M9.5 8V7.5Q9.5 6.5 10.5 6.5H13Q14 6.5 14 7.5V10Q14 11 13 11H12"/></g></svg>
<div class="a" style="left:1188px;top:78px;width:14px;height:14px;background:#fff;border:1px solid #b5b5b5;border-radius:2px"></div>
<svg class="a" style="left:1188px;top:78px" width="14" height="14"><path d="M3.3 7.2L6 10.8L10.5 2.8" fill="none" stroke="#000" stroke-width="1.7"/></svg>
<div class="a" style="left:1207px;top:78.5px;font-size:12.6px;color:#1a1a1a;white-space:nowrap">Automatic Preview</div>
<div class="a" style="left:1361px;top:73px;width:170px;height:25px;background:linear-gradient(#fbfbfb,#ececec);border:1px solid #bcbcbc;border-radius:3px"></div>
<div class="a" style="left:1366px;top:78px;font-size:12.6px;color:#1a1a1a;white-space:nowrap">Show Details</div>
<div class="a" style="left:1513px;top:83px;width:0;height:0;border-left:5px solid transparent;border-right:5px solid transparent;border-top:5px solid #555"></div>
<div class="a" style="left:1188px;top:102px;width:253px;height:25px;background:linear-gradient(#fbfbfb,#ececec);border:1px solid #bcbcbc;border-radius:3px"></div>
<div class="a" style="left:1193px;top:107.5px;font-size:12.6px;color:#1a1a1a;white-space:nowrap">&lt;design default&gt;</div>
<div class="a" style="left:1424px;top:112px;width:0;height:0;border-left:5px solid transparent;border-right:5px solid transparent;border-top:5px solid #555"></div>
<div class="a" style="left:1445px;top:102px;width:40px;height:25px;background:linear-gradient(#fbfbfb,#ececec);border:1px solid #bcbcbc;border-radius:3px"></div>
<div class="a" style="left:1460px;top:107.5px;font-size:13px;color:#1a1a1a">+</div>
<div class="a" style="left:1489px;top:102px;width:40px;height:25px;background:linear-gradient(#fbfbfb,#ececec);border:1px solid #c8c8c8;border-radius:3px"></div>
<div class="a" style="left:1504px;top:106px;font-size:12px;color:#aaa">-</div>
<div class="a" style="left:1188px;top:131px;width:340px;height:810px;border-left:1px solid #b8b8b8;border-top:1px solid #b8b8b8"></div>

<div class="a hdr" style="top:133px"><div class="a tri"></div><div class="a tx">Parameters</div></div>
<div class="a lbl" style="left:1193px;top:168.2px">$fn</div>
<div class="a spin" style="top:161.7px"><div class="a v">200</div><div class="a sep"></div></div>
<div class="a" style="left:1512.5px;top:168.2px;width:0;height:0;border-left:4px solid transparent;border-right:4px solid transparent;border-bottom:4.5px solid #555"></div>
<div class="a" style="left:1512.5px;top:178.7px;width:0;height:0;border-left:4px solid transparent;border-right:4px solid transparent;border-top:4.5px solid #555"></div>
<div class="a hdr" style="top:192px"><div class="a tri"></div><div class="a tx">Plug</div></div>
<div class="a lbl" style="left:1193px;top:227.8px">Plug diameter</div>
<div class="a spin" style="top:221.3px"><div class="a v">18.00</div><div class="a sep"></div></div>
<div class="a" style="left:1512.5px;top:227.8px;width:0;height:0;border-left:4px solid transparent;border-right:4px solid transparent;border-bottom:4.5px solid #555"></div>
<div class="a" style="left:1512.5px;top:238.3px;width:0;height:0;border-left:4px solid transparent;border-right:4px solid transparent;border-top:4.5px solid #555"></div>
<div class="a groove" style="top:258.9px"></div>
<div class="a fill" style="top:258.9px;width:20.5px"></div>
<div class="a handle" style="left:1207.0px;top:254.9px"></div>
<div class="a lbl" style="left:1193px;top:276.8px">Plug height</div>
<div class="a spin" style="top:270.3px"><div class="a v">6.00</div><div class="a sep"></div></div>
<div class="a" style="left:1512.5px;top:276.8px;width:0;height:0;border-left:4px solid transparent;border-right:4px solid transparent;border-bottom:4.5px solid #555"></div>
<div class="a" style="left:1512.5px;top:287.3px;width:0;height:0;border-left:4px solid transparent;border-right:4px solid transparent;border-top:4.5px solid #555"></div>
<div class="a groove" style="top:307.9px"></div>
<div class="a fill" style="top:307.9px;width:11.0px"></div>
<div class="a handle" style="left:1197.5px;top:303.9px"></div>
<div class="a lbl" style="left:1193px;top:325.8px">Plug hole shape</div>
<div class="a spin" style="top:319.3px"><div class="a v">6</div><div class="a sep"></div></div>
<div class="a" style="left:1512.5px;top:325.8px;width:0;height:0;border-left:4px solid transparent;border-right:4px solid transparent;border-bottom:4.5px solid #555"></div>
<div class="a" style="left:1512.5px;top:336.3px;width:0;height:0;border-left:4px solid transparent;border-right:4px solid transparent;border-top:4.5px solid #555"></div>
<div class="a groove" style="top:356.9px"></div>
<div class="a fill" style="top:356.9px;width:111.5px"></div>
<div class="a handle" style="left:1298.0px;top:352.9px"></div>
<div class="a lbl" style="left:1193px;top:374.8px">Plug hole size</div>
<div class="a spin" style="top:368.3px"><div class="a v">6.00</div><div class="a sep"></div></div>
<div class="a" style="left:1512.5px;top:374.8px;width:0;height:0;border-left:4px solid transparent;border-right:4px solid transparent;border-bottom:4.5px solid #555"></div>
<div class="a" style="left:1512.5px;top:385.3px;width:0;height:0;border-left:4px solid transparent;border-right:4px solid transparent;border-top:4.5px solid #555"></div>
<div class="a groove" style="top:405.9px"></div>
<div class="a fill" style="top:405.9px;width:90.0px"></div>
<div class="a handle" style="left:1276.5px;top:401.9px"></div>
<div class="a lbl" style="left:1193px;top:423.8px">Plug hole depth</div>
<div class="a spin" style="top:417.3px"><div class="a v">3.00</div><div class="a sep"></div></div>
<div class="a" style="left:1512.5px;top:423.8px;width:0;height:0;border-left:4px solid transparent;border-right:4px solid transparent;border-bottom:4.5px solid #555"></div>
<div class="a" style="left:1512.5px;top:434.3px;width:0;height:0;border-left:4px solid transparent;border-right:4px solid transparent;border-top:4.5px solid #555"></div>
<div class="a groove" style="top:454.9px"></div>
<div class="a fill" style="top:454.9px;width:76.5px"></div>
<div class="a handle" style="left:1263.0px;top:450.9px"></div>
<div class="a hdr" style="top:466px"><div class="a tri"></div><div class="a tx">Threads</div></div>
<div class="a lbl" style="left:1193px;top:501.8px">Thread pitch</div>
<div class="a spin" style="top:495.3px"><div class="a v">6.000</div><div class="a sep"></div></div>
<div class="a" style="left:1512.5px;top:501.8px;width:0;height:0;border-left:4px solid transparent;border-right:4px solid transparent;border-bottom:4.5px solid #555"></div>
<div class="a" style="left:1512.5px;top:512.3px;width:0;height:0;border-left:4px solid transparent;border-right:4px solid transparent;border-top:4.5px solid #555"></div>
<div class="a groove" style="top:532.7px"></div>
<div class="a fill" style="top:532.7px;width:126.0px"></div>
<div class="a handle" style="left:1312.5px;top:528.7px"></div>
<div class="a lbl" style="left:1193px;top:550.8px">Thread shape</div>
<div class="a spin" style="top:544.3px"><div class="a v">4</div><div class="a sep"></div></div>
<div class="a" style="left:1512.5px;top:550.8px;width:0;height:0;border-left:4px solid transparent;border-right:4px solid transparent;border-bottom:4.5px solid #555"></div>
<div class="a" style="left:1512.5px;top:561.3px;width:0;height:0;border-left:4px solid transparent;border-right:4px solid transparent;border-top:4.5px solid #555"></div>
<div class="a groove" style="top:581.7px"></div>
<div class="a fill" style="top:581.7px;width:52.0px"></div>
<div class="a handle" style="left:1238.5px;top:577.7px"></div>
<div class="a lbl" style="left:1193px;top:599.8px">Thread thickness</div>
<div class="a spin" style="top:593.3px"><div class="a v">0.742</div><div class="a sep"></div></div>
<div class="a" style="left:1512.5px;top:599.8px;width:0;height:0;border-left:4px solid transparent;border-right:4px solid transparent;border-bottom:4.5px solid #555"></div>
<div class="a" style="left:1512.5px;top:610.3px;width:0;height:0;border-left:4px solid transparent;border-right:4px solid transparent;border-top:4.5px solid #555"></div>
<div class="a groove" style="top:630.7px"></div>
<div class="a fill" style="top:630.7px;width:59.3px"></div>
<div class="a handle" style="left:1245.8px;top:626.7px"></div>
<div class="a lbl" style="left:1193px;top:648.8px">Start adjust</div>
<div class="a spin" style="top:642.3px"><div class="a v">-200.00</div><div class="a sep"></div></div>
<div class="a" style="left:1512.5px;top:648.8px;width:0;height:0;border-left:4px solid transparent;border-right:4px solid transparent;border-bottom:4.5px solid #555"></div>
<div class="a" style="left:1512.5px;top:659.3px;width:0;height:0;border-left:4px solid transparent;border-right:4px solid transparent;border-top:4.5px solid #aaa"></div>
<div class="a groove" style="top:679.7px"></div>
<div class="a handle" style="left:1194.0px;top:675.7px"></div>
<div class="a lbl" style="left:1193px;top:697.8px">End adjust</div>
<div class="a spin" style="top:691.3px"><div class="a v">-200.00</div><div class="a sep"></div></div>
<div class="a" style="left:1512.5px;top:697.8px;width:0;height:0;border-left:4px solid transparent;border-right:4px solid transparent;border-bottom:4.5px solid #555"></div>
<div class="a" style="left:1512.5px;top:708.3px;width:0;height:0;border-left:4px solid transparent;border-right:4px solid transparent;border-top:4.5px solid #aaa"></div>
<div class="a groove" style="top:728.7px"></div>
<div class="a handle" style="left:1194.0px;top:724.7px"></div>
</body></html>
